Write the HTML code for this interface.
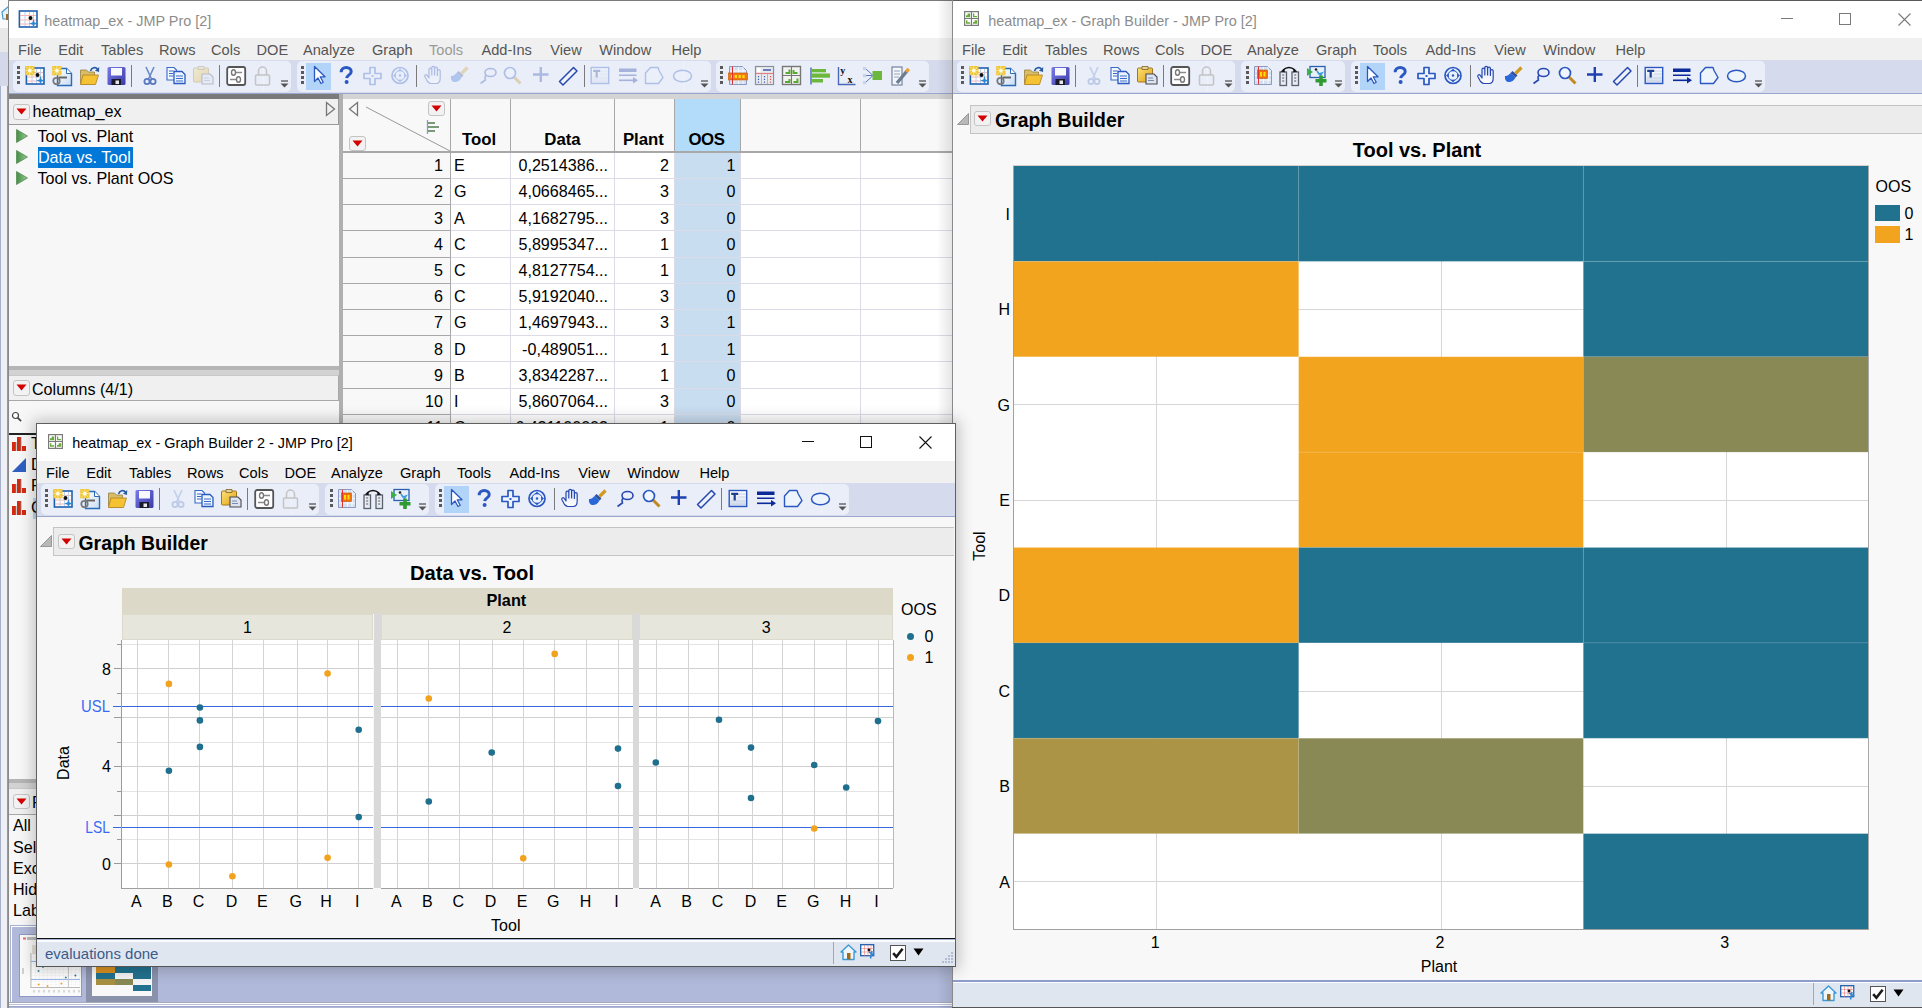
<!DOCTYPE html>
<html><head><meta charset="utf-8"><style>
html,body{margin:0;padding:0}
body{width:1922px;height:1008px;overflow:hidden;position:relative;background:#f0f0f0;font-family:'Liberation Sans', sans-serif}
.t{position:absolute;white-space:pre;line-height:1;font-family:'Liberation Sans', sans-serif}
.r{position:absolute;box-sizing:content-box}
svg{overflow:visible}
</style></head><body>
<div class="r" style="left:0.0px;top:0.0px;width:8.0px;height:28.0px;background:#fafafa;"></div><div class="r" style="left:0.0px;top:28.0px;width:8.0px;height:24.0px;background:#e8e8e8;"></div><div class="r" style="left:0.0px;top:52.0px;width:8.0px;height:34.0px;background:#d3d9eb;"></div><div class="r" style="left:0.0px;top:86.0px;width:8.0px;height:922.0px;background:#eef0f5;"></div><div class="r" style="left:0.0px;top:86.0px;width:1.0px;height:922.0px;background:#a6b0c8;"></div><div class="r" style="left:7.0px;top:86.0px;width:1.0px;height:922.0px;background:#8d99b3;"></div><svg style="position:absolute;left:1px;top:4px" width="8" height="16" viewBox="0 0 8 16"><path d="M1 8L8 2v13H2z" fill="#e4f0fa" stroke="#4a9ad0" stroke-width="1.2"/><rect x="5" y="10" width="3" height="6" fill="#9a6a20"/></svg><div class="r" style="left:8.0px;top:0.0px;width:1.0px;height:1008.0px;background:#8a8a8a;"></div><div class="r" style="left:9.0px;top:0.0px;width:944.0px;height:1.0px;background:#7a7a7a;"></div><div class="r" style="left:9.0px;top:1.0px;width:944.0px;height:37.0px;background:#fff;"></div><div class="t" style="left:44.3px;top:14.0px;font-size:14.4px;color:#8c8c8c;">heatmap_ex - JMP Pro [2]</div><svg style="position:absolute;left:17.0px;top:8.0px;opacity:1.0" width="22" height="22" viewBox="0 0 22 22"><rect x="2.4" y="3" width="17.6" height="16" fill="#fff" stroke="#1f5fb0" stroke-width="1.6"/><path d="M3 7.5h16M3 12h16M3 16h16" stroke="#f3a0a0" stroke-width=".8"/><path d="M8 4v14M12.5 4v14M16.5 4v14" stroke="#c0d0e8" stroke-width="1"/><circle cx="13.5" cy="10" r="2" fill="#111"/><path d="M16.5 11l1.1 3.4 3.4 1.1-3.4 1.1-1.1 3.4-1.1-3.4-3.4-1.1 3.4-1.1z" fill="#2a8ad8"/></svg><div class="r" style="left:9.0px;top:38.0px;width:944.0px;height:22.0px;background:#f0f0f0;"></div><div class="t" style="left:18.0px;top:42.9px;font-size:14.6px;color:#555;">File</div><div class="t" style="left:58.2px;top:42.9px;font-size:14.6px;color:#555;">Edit</div><div class="t" style="left:101.0px;top:42.9px;font-size:14.6px;color:#555;">Tables</div><div class="t" style="left:159.0px;top:42.9px;font-size:14.6px;color:#555;">Rows</div><div class="t" style="left:211.0px;top:42.9px;font-size:14.6px;color:#555;">Cols</div><div class="t" style="left:256.5px;top:42.9px;font-size:14.6px;color:#555;">DOE</div><div class="t" style="left:303.0px;top:42.9px;font-size:14.6px;color:#555;">Analyze</div><div class="t" style="left:372.0px;top:42.9px;font-size:14.6px;color:#555;">Graph</div><div class="t" style="left:429.0px;top:42.9px;font-size:14.6px;color:#9a9a9a;">Tools</div><div class="t" style="left:481.5px;top:42.9px;font-size:14.6px;color:#555;">Add-Ins</div><div class="t" style="left:550.3px;top:42.9px;font-size:14.6px;color:#555;">View</div><div class="t" style="left:599.3px;top:42.9px;font-size:14.6px;color:#555;">Window</div><div class="t" style="left:671.4px;top:42.9px;font-size:14.6px;color:#555;">Help</div><div class="r" style="left:9.0px;top:60.0px;width:944.0px;height:33.0px;background:#d5dbed;"></div><div class="r" style="left:9.0px;top:93.0px;width:944.0px;height:1.0px;background:#9ba6cf;"></div><div class="r" style="left:13px;top:61px;width:278px;height:31px;background:#e9eef9;border-radius:5px"></div><div class="r" style="left:263px;top:61px;width:1px;height:31px;background:#eef2fb"></div><div style="position:absolute;left:17px;top:66px;width:3px;height:3px;background:#5a5a5a"></div><div style="position:absolute;left:17px;top:71px;width:3px;height:3px;background:#5a5a5a"></div><div style="position:absolute;left:17px;top:76px;width:3px;height:3px;background:#5a5a5a"></div><div style="position:absolute;left:17px;top:81px;width:3px;height:3px;background:#5a5a5a"></div><svg style="position:absolute;left:23.5px;top:65.0px;opacity:1" width="22" height="22" viewBox="0 0 22 22"><rect x="2.4" y="3" width="17.6" height="16" fill="#fff" stroke="#1f5fb0" stroke-width="1.6"/><path d="M3 7.5h16M3 12h16M3 16h16" stroke="#f3a0a0" stroke-width=".8"/><path d="M8 4v14M12.5 4v14M16.5 4v14" stroke="#c0d0e8" stroke-width="1"/><circle cx="13.5" cy="10" r="2" fill="#111"/><path d="M16.5 11l1.1 3.4 3.4 1.1-3.4 1.1-1.1 3.4-1.1-3.4-3.4-1.1 3.4-1.1z" fill="#2a8ad8"/><rect x="1.2" y="1" width="9.3" height="9.3" fill="#efc535"/><path d="M5.85 1.2v8.9M1.4 5.65h8.9M2.2 2l7.3 7.3M9.5 2L2.2 9.3" stroke="#fbeaa0" stroke-width=".9"/><circle cx="5.85" cy="5.65" r="1.8" fill="#fffbe8"/></svg><svg style="position:absolute;left:50.8px;top:65.0px;opacity:1" width="22" height="22" viewBox="0 0 22 22"><defs><linearGradient id="pgg" x1="0" y1="0" x2="1" y2="1"><stop offset="0" stop-color="#fff"/><stop offset="1" stop-color="#c8dcf4"/></linearGradient></defs><path d="M6.5 3.5h9l5 5v12h-14z" fill="url(#pgg)" stroke="#2a6bb8" stroke-width="1.4"/><path d="M15.5 3.5v5h5" fill="#fff" stroke="#2a6bb8" stroke-width="1"/><circle cx="5.5" cy="16" r="3.2" fill="none" stroke="#7a7a7a" stroke-width="1.8"/><path d="M7.5 12.5h8.5" stroke="#666" stroke-width="2"/><rect x="1.2" y="1" width="9.3" height="9.3" fill="#efc535"/><path d="M5.85 1.2v8.9M1.4 5.65h8.9M2.2 2l7.3 7.3M9.5 2L2.2 9.3" stroke="#fbeaa0" stroke-width=".9"/><circle cx="5.85" cy="5.65" r="1.8" fill="#fffbe8"/></svg><svg style="position:absolute;left:78.0px;top:65.0px;opacity:1" width="22" height="22" viewBox="0 0 22 22"><path d="M2.5 5h6l2 2h6v12h-14z" fill="#d8bc68" stroke="#9a8040" stroke-width=".8"/><path d="M5 10h15.5l-3 9.5H2.5z" fill="#f4c232" stroke="#b08020" stroke-width=".8"/><path d="M12.5 6C13.5 2.5 17.5 1.5 19.5 4" fill="none" stroke="#2a5aa0" stroke-width="1.6"/><path d="M21.2 2l-.2 5-4-1.2z" fill="#2a5aa0"/></svg><svg style="position:absolute;left:104.7px;top:65.0px;opacity:1" width="22" height="22" viewBox="0 0 22 22"><defs><linearGradient id="svg_" x1="0" y1="0" x2="1" y2="1"><stop offset="0" stop-color="#7a7ae8"/><stop offset="1" stop-color="#3a3aa8"/></linearGradient></defs><rect x="2.5" y="2" width="18" height="18" rx="1.5" fill="url(#svg_)"/><rect x="6" y="3" width="11" height="7.5" fill="#f8f8ff"/><rect x="6.5" y="14" width="9.5" height="6" fill="#1a1a2a"/><rect x="10.5" y="15.5" width="3.5" height="3.5" fill="#e8e8e8"/></svg><svg style="position:absolute;left:138.5px;top:65.0px;opacity:1" width="22" height="22" viewBox="0 0 22 22"><path d="M7 2l5.5 12M15 2l-5.5 12" stroke="#6a8ac8" stroke-width="1.6"/><circle cx="8" cy="16.5" r="2.6" fill="none" stroke="#5a7ac0" stroke-width="1.8"/><circle cx="14" cy="16.5" r="2.6" fill="none" stroke="#5a7ac0" stroke-width="1.8"/></svg><svg style="position:absolute;left:164.5px;top:65.0px;opacity:1" width="22" height="22" viewBox="0 0 22 22"><path d="M2 2.5h7l2.5 2.5v10H2z" fill="#f4f8ff" stroke="#3a6ac8" stroke-width="1.1"/><path d="M9 6.5h8l3 3v9H9z" fill="#eef4ff" stroke="#2a5ac0" stroke-width="1.3"/><path d="M4 6h4.5M4 8.5h4.5M4 11h4.5M11 11h7M11 13.5h7M11 16h7" stroke="#3a6ac8" stroke-width="1"/></svg><svg style="position:absolute;left:191.8px;top:65.0px;opacity:0.3" width="22" height="22" viewBox="0 0 22 22"><defs><linearGradient id="pst" x1="0" y1="0" x2="1" y2="1"><stop offset="0" stop-color="#fce27a"/><stop offset="1" stop-color="#e0a010"/></linearGradient></defs><rect x="1.5" y="3" width="15" height="14" rx="1" fill="url(#pst)" stroke="#a07820" stroke-width="1"/><path d="M6 1.5h6v3H6z" fill="#e4d49a" stroke="#806020" stroke-width=".8"/><path d="M10 9h8l3 3v7H10z" fill="#dde4f0" stroke="#4a4a50" stroke-width="1.1"/><path d="M12 13h5M12 15.5h6" stroke="#7a8aa8" stroke-width="1"/></svg><svg style="position:absolute;left:224.9px;top:65.0px;opacity:1" width="22" height="22" viewBox="0 0 22 22"><rect x="2.2" y="2" width="18" height="18" rx="2" fill="#fff" stroke="#555" stroke-width="1.8"/><path d="M6 7.5h11M5 14.5h11" stroke="#8a8a8a" stroke-width="1.5"/><ellipse cx="8.5" cy="7.5" rx="2" ry="2.8" fill="#fff" stroke="#777" stroke-width="1.4"/><ellipse cx="13.5" cy="14.5" rx="2" ry="2.8" fill="#fff" stroke="#777" stroke-width="1.4"/></svg><svg style="position:absolute;left:252.2px;top:65.0px;opacity:1" width="22" height="22" viewBox="0 0 22 22"><rect x="3.5" y="10" width="14" height="10" rx="1" fill="none" stroke="#c4c4c4" stroke-width="1.5"/><path d="M6.5 10V6a4 4 0 0 1 8 0v4" fill="none" stroke="#c4c4c4" stroke-width="1.5"/></svg><div class="r" style="left:131.3px;top:65.0px;width:1.0px;height:22.0px;background:#7a7a7a;"></div><div class="r" style="left:219.2px;top:65.0px;width:1.0px;height:22.0px;background:#7a7a7a;"></div><svg style="position:absolute;left:280.3px;top:80px" width="9" height="9" viewBox="0 0 9 9"><path d="M1 1h7" stroke="#555" stroke-width="1.3"/><path d="M.5 3.5h8l-4 4z" fill="#555"/></svg><div class="r" style="left:297px;top:61px;width:414px;height:31px;background:#e9eef9;border-radius:5px"></div><div class="r" style="left:683px;top:61px;width:1px;height:31px;background:#eef2fb"></div><div style="position:absolute;left:301px;top:66px;width:3px;height:3px;background:#5a5a5a"></div><div style="position:absolute;left:301px;top:71px;width:3px;height:3px;background:#5a5a5a"></div><div style="position:absolute;left:301px;top:76px;width:3px;height:3px;background:#5a5a5a"></div><div style="position:absolute;left:301px;top:81px;width:3px;height:3px;background:#5a5a5a"></div><div class="r" style="left:306.0px;top:63.0px;width:25.0px;height:27.0px;background:#b2d4f8;"></div><svg style="position:absolute;left:307.7px;top:65.0px;opacity:1" width="22" height="22" viewBox="0 0 22 22"><path d="M6.5 1.5v15l3.5-3.5 3 5.5 2.2-1.2-3-5.5h4.8z" fill="#fff" stroke="#2a58c0" stroke-width="1.3" stroke-linejoin="round"/></svg><svg style="position:absolute;left:335.0px;top:65.0px;opacity:1" width="22" height="22" viewBox="0 0 22 22"><path d="M6.2 7.2c0-3 2.5-4.7 5-4.7 3 0 5 1.8 5 4.2 0 3-4.2 3.3-4.5 6.5" fill="none" stroke="#2a58c0" stroke-width="3"/><circle cx="11.6" cy="17" r="2" fill="#2a58c0"/></svg><svg style="position:absolute;left:361.0px;top:65.0px;opacity:0.3" width="22" height="22" viewBox="0 0 22 22"><path d="M9 2.5h5v6h6v5h-6v6H9v-6H3v-5h6z" fill="#eef4ff" stroke="#2a58c0" stroke-width="1.7" stroke-linejoin="round"/><rect x="10.5" y="10" width="2" height="2" fill="#2a58c0"/></svg><svg style="position:absolute;left:388.5px;top:65.0px;opacity:0.3" width="22" height="22" viewBox="0 0 22 22"><circle cx="11" cy="10.5" r="8" fill="#e8f0fc" stroke="#2a58c0" stroke-width="1.7"/><circle cx="11" cy="10.5" r="5" fill="none" stroke="#2a58c0" stroke-width="1"/><path d="M11 3.5l2.2 2.8h-4.4zM11 17.5l2.2-2.8h-4.4zM4 10.5l2.8-2.2v4.4zM18 10.5l-2.8-2.2v4.4z" fill="#2a58c0"/><circle cx="11" cy="10.5" r="1.2" fill="#2a58c0"/></svg><svg style="position:absolute;left:422.7px;top:65.0px;opacity:0.3" width="22" height="22" viewBox="0 0 22 22"><defs><linearGradient id="hnd" x1="0" y1="0" x2="0" y2="1"><stop offset="0" stop-color="#d8e4f8"/><stop offset="1" stop-color="#fff"/></linearGradient></defs><path d="M4.5 16.5L1.8 11.5a1.3 1.3 0 0 1 2.2-1.3L6 13V4.5a1.4 1.4 0 0 1 2.8 0V10V2.8a1.4 1.4 0 0 1 2.8 0V10V3.5a1.4 1.4 0 0 1 2.8 0V10.5V6a1.4 1.4 0 0 1 2.8 0V13c0 3-1.5 5.5-4 5.5H8c-1.5 0-2.5-1-3.5-2z" fill="url(#hnd)" stroke="#2848b0" stroke-width="1.2" stroke-linejoin="round"/></svg><svg style="position:absolute;left:449.0px;top:65.0px;opacity:0.3" width="22" height="22" viewBox="0 0 22 22"><path d="M12.5 8.5l6-6" stroke="#d09a20" stroke-width="3.2"/><path d="M2 11c2 .5 3.5-1 5.5-3l5 4.5c-1.5 3-4 4.5-6.5 4.5S1.5 15 2 11z" fill="#2a68d8"/><path d="M7.5 8l5 4.5 2-2-5-4.5z" fill="#3050a0"/></svg><svg style="position:absolute;left:476.8px;top:65.0px;opacity:0.3" width="22" height="22" viewBox="0 0 22 22"><ellipse cx="13.5" cy="7.5" rx="5.5" ry="4" fill="none" stroke="#2848b0" stroke-width="1.6"/><path d="M9.5 10c-2 1.5-2 3.5-.5 4.5M9 14.5l-5.5 4" fill="none" stroke="#2848b0" stroke-width="1.6"/></svg><svg style="position:absolute;left:502.3px;top:65.0px;opacity:0.3" width="22" height="22" viewBox="0 0 22 22"><path d="M11.5 11.5l7 7" stroke="#c08a20" stroke-width="3"/><circle cx="8" cy="8" r="5.5" fill="#f0f6ff" stroke="#2a58c0" stroke-width="1.7"/></svg><svg style="position:absolute;left:529.9px;top:65.0px;opacity:0.3" width="22" height="22" viewBox="0 0 22 22"><path d="M10.8 2v15M3 9.5h15.5" stroke="#1f40b0" stroke-width="2.4"/></svg><svg style="position:absolute;left:557.2px;top:65.0px;opacity:1" width="22" height="22" viewBox="0 0 22 22"><path d="M2.5 16.5L16.5 2.5l3.5 3.5L6 20z" fill="#eef2fb" stroke="#2848b0" stroke-width="1.5" stroke-linejoin="round"/></svg><svg style="position:absolute;left:589.0px;top:65.0px;opacity:0.3" width="22" height="22" viewBox="0 0 22 22"><defs><linearGradient id="tbx" x1="0" y1="0" x2="0" y2="1"><stop offset="0" stop-color="#fff"/><stop offset="1" stop-color="#cfd9ea"/></linearGradient></defs><rect x="2.2" y="2.5" width="17.5" height="16" fill="url(#tbx)" stroke="#2a58c0" stroke-width="1.4"/><path d="M11 6h8M11 9h8M4 13h15M4 16h15" stroke="#c8d4e8" stroke-width="1"/><path d="M4.2 4.8h7v2.2h-2.4v5.5H6.6V7H4.2z" fill="#1f3f90"/></svg><svg style="position:absolute;left:617.0px;top:65.0px;opacity:0.3" width="22" height="22" viewBox="0 0 22 22"><rect x="2" y="3.5" width="17.5" height="3.5" fill="#0a2a9a"/><rect x="2" y="9.5" width="17.5" height="1.5" fill="#0a2a9a"/><rect x="2" y="14.5" width="15" height="1.6" fill="#0a2a9a"/><path d="M16 12l5 3.3-5 3.3z" fill="#0a2a9a"/></svg><svg style="position:absolute;left:643.0px;top:65.0px;opacity:0.3" width="22" height="22" viewBox="0 0 22 22"><path d="M2.5 8L7.5 2.5h7.5l1 3 4 7-4.5 6H2.5z" fill="#eef4fc" stroke="#2a58c0" stroke-width="1.4" stroke-linejoin="round"/></svg><svg style="position:absolute;left:671.4px;top:65.0px;opacity:0.3" width="22" height="22" viewBox="0 0 22 22"><ellipse cx="11.5" cy="11" rx="9" ry="5.8" fill="#eef4fc" stroke="#2a58c0" stroke-width="1.5"/></svg><div class="r" style="left:416.0px;top:65.0px;width:1.0px;height:22.0px;background:#7a7a7a;"></div><div class="r" style="left:583.5px;top:65.0px;width:1.0px;height:22.0px;background:#7a7a7a;"></div><svg style="position:absolute;left:699.5px;top:80px" width="9" height="9" viewBox="0 0 9 9"><path d="M1 1h7" stroke="#555" stroke-width="1.3"/><path d="M.5 3.5h8l-4 4z" fill="#555"/></svg><div class="r" style="left:716px;top:61px;width:213px;height:31px;background:#e9eef9;border-radius:5px"></div><div class="r" style="left:901px;top:61px;width:1px;height:31px;background:#eef2fb"></div><div style="position:absolute;left:720px;top:66px;width:3px;height:3px;background:#5a5a5a"></div><div style="position:absolute;left:720px;top:71px;width:3px;height:3px;background:#5a5a5a"></div><div style="position:absolute;left:720px;top:76px;width:3px;height:3px;background:#5a5a5a"></div><div style="position:absolute;left:720px;top:81px;width:3px;height:3px;background:#5a5a5a"></div><svg style="position:absolute;left:726.8px;top:65.0px;opacity:1.0" width="22" height="22" viewBox="0 0 22 22"><path d="M2.5 1.5h13l4 4v14h-17z" fill="#d4dff2" stroke="#8a9ac0" stroke-width="1"/><path d="M3 6h16M3 15h16M7 2v17M11.5 2v17M16 2v17" stroke="#fff" stroke-width=".8"/><rect x="1.5" y="8" width="19" height="7" fill="#f07818" stroke="#c05800" stroke-width=".6"/><path d="M4 11.5h14" stroke="#ffe000" stroke-width="3" stroke-dasharray="2.2 1.6"/><path d="M5.5 1.5v18" stroke="#e03030" stroke-width="1"/></svg><svg style="position:absolute;left:754.0px;top:65.0px;opacity:1.0" width="22" height="22" viewBox="0 0 22 22"><rect x="1.5" y="1.5" width="18" height="18" fill="#e8ebf0" stroke="#8a8f98" stroke-width="1.2"/><rect x="3" y="3" width="3.5" height="4" fill="#fff"/><path d="M9 5h8" stroke="#3a5ab0" stroke-width="1.5"/><path d="M2 8.5h17" stroke="#e08080" stroke-width="1.2"/><path d="M7.5 9v10M13.5 9v10" stroke="#b0b4bc" stroke-width="1"/><path d="M4.5 11v7M10.5 11v7" stroke="#3a5ab0" stroke-width="1.2" stroke-dasharray="1.2 1.6"/><path d="M16.5 11v7" stroke="#e05050" stroke-width="1.2" stroke-dasharray="1.2 1.6"/></svg><svg style="position:absolute;left:780.5px;top:65.0px;opacity:1.0" width="22" height="22" viewBox="0 0 22 22"><rect x="1.5" y="1.5" width="18" height="18" fill="#f2f2f2" stroke="#777" stroke-width="1.4"/><path d="M10.5 2v17M2 10.5h17" stroke="#777" stroke-width="1.1"/><path d="M4.5 8h4V4.5M12.5 5v3h4M4 17h4.5v-3M12.5 17h4v-3.5" fill="none" stroke="#5aa830" stroke-width="2"/></svg><svg style="position:absolute;left:808.4px;top:65.0px;opacity:1.0" width="22" height="22" viewBox="0 0 22 22"><path d="M3 2.5v17" stroke="#4a68b8" stroke-width="1.4"/><rect x="4" y="4" width="14" height="3.3" fill="#6cb83c"/><rect x="4" y="8.5" width="18" height="4.2" fill="#6cb83c"/><rect x="4" y="14" width="11" height="3.5" fill="#6cb83c"/></svg><svg style="position:absolute;left:835.0px;top:65.0px;opacity:1.0" width="22" height="22" viewBox="0 0 22 22"><path d="M3.5 2v17.5h17" fill="none" stroke="#4a68b8" stroke-width="1.4"/><text x="5.2" y="8.5" font-family="Liberation Serif" font-weight="bold" font-size="10" fill="#111">y</text><text x="12.5" y="17.5" font-family="Liberation Serif" font-weight="bold" font-size="10" fill="#111">x</text></svg><svg style="position:absolute;left:862.0px;top:65.0px;opacity:1.0" width="22" height="22" viewBox="0 0 22 22"><rect x="10.5" y="6" width="9.5" height="9" fill="#6cb83c"/><path d="M4 4l6.5 6M4 17l6.5-6M4 10.5h6.5" stroke="#5a78b8" stroke-width="1"/><rect x="1" y="2" width="3.2" height="3.2" fill="#c8d4ea"/><rect x="1" y="9" width="3.2" height="3.2" fill="#c8d4ea"/><rect x="1" y="16" width="3.2" height="3.2" fill="#c8d4ea"/></svg><svg style="position:absolute;left:890.0px;top:65.0px;opacity:1.0" width="22" height="22" viewBox="0 0 22 22"><rect x="2" y="2" width="10" height="18" fill="#f4f6fa" stroke="#6a7a98" stroke-width="1.1"/><path d="M4 6h6M4 9h6M4 12h5" stroke="#8a9ab8" stroke-width=".9"/><path d="M7 18l10-12" stroke="#6d7d90" stroke-width="3.4"/><path d="M16.3 6.8l2.4-2.9" stroke="#f0a030" stroke-width="3.4"/></svg><svg style="position:absolute;left:917.5px;top:80px" width="9" height="9" viewBox="0 0 9 9"><path d="M1 1h7" stroke="#555" stroke-width="1.3"/><path d="M.5 3.5h8l-4 4z" fill="#555"/></svg><div class="r" style="left:9.0px;top:94.0px;width:944.0px;height:914.0px;background:#f7f7f7;"></div><div class="r" style="left:9.0px;top:94.0px;width:330.0px;height:5.0px;background:#7a7a7a;"></div><div class="r" style="left:9.0px;top:99.0px;width:329.0px;height:25.0px;background:#f0f0f0;border-bottom:1px solid #9a9a9a;border-right:1px solid #9a9a9a"></div><div class="r" style="left:13px;top:104px;width:15px;height:14px;border:1px solid #c4c4c4;border-radius:3px;background:#f2f2f2"></div><svg style="position:absolute;left:16px;top:108px" width="11" height="7" viewBox="0 0 11 7"><path d="M0.5 0.5h10l-5 6z" fill="#d40000"/></svg><div class="t" style="left:32.5px;top:102.8px;font-size:16.2px;color:#000;">heatmap_ex</div><svg style="position:absolute;left:325px;top:101px" width="11" height="16" viewBox="0 0 11 16"><path d="M1.5 1.5L9.5 8L1.5 14.5z" fill="#f0f0f0" stroke="#777" stroke-width="1.3"/></svg><svg style="position:absolute;left:16px;top:128.5px" width="12" height="14" viewBox="0 0 12 14"><defs><linearGradient id="gt" x1="0" y1="0" x2="1" y2="0"><stop offset="0" stop-color="#3f8f3f"/><stop offset="1" stop-color="#98c898"/></linearGradient></defs><path d="M.5 .5L11.5 7L.5 13.5z" fill="url(#gt)" stroke="#5a8a5a" stroke-width=".8"/></svg><div class="t" style="left:37.5px;top:127.9px;font-size:16.1px;color:#000;">Tool vs. Plant</div><svg style="position:absolute;left:16px;top:149.5px" width="12" height="14" viewBox="0 0 12 14"><defs><linearGradient id="gt" x1="0" y1="0" x2="1" y2="0"><stop offset="0" stop-color="#3f8f3f"/><stop offset="1" stop-color="#98c898"/></linearGradient></defs><path d="M.5 .5L11.5 7L.5 13.5z" fill="url(#gt)" stroke="#5a8a5a" stroke-width=".8"/></svg><div class="r" style="left:38.0px;top:147.0px;width:95.0px;height:20.5px;background:#0078d7;"></div><div class="t" style="left:38.0px;top:148.9px;font-size:16.1px;color:#fff;">Data vs. Tool</div><svg style="position:absolute;left:16px;top:170.5px" width="12" height="14" viewBox="0 0 12 14"><defs><linearGradient id="gt" x1="0" y1="0" x2="1" y2="0"><stop offset="0" stop-color="#3f8f3f"/><stop offset="1" stop-color="#98c898"/></linearGradient></defs><path d="M.5 .5L11.5 7L.5 13.5z" fill="url(#gt)" stroke="#5a8a5a" stroke-width=".8"/></svg><div class="t" style="left:37.5px;top:169.9px;font-size:16.1px;color:#000;">Tool vs. Plant OOS</div><div class="r" style="left:9.0px;top:366.0px;width:330.0px;height:3.5px;background:#b5b5b5;"></div><div class="r" style="left:9.0px;top:369.5px;width:330.0px;height:6.0px;background:#d2d2d2;"></div><div class="r" style="left:9.0px;top:375.0px;width:329.0px;height:24.0px;background:#f0f0f0;border-bottom:1px solid #a8a8a8;border-right:1px solid #a8a8a8;border-top:1px solid #c8c8c8"></div><div class="r" style="left:13px;top:380px;width:15px;height:14px;border:1px solid #c4c4c4;border-radius:3px;background:#f2f2f2"></div><svg style="position:absolute;left:16px;top:384px" width="11" height="7" viewBox="0 0 11 7"><path d="M0.5 0.5h10l-5 6z" fill="#d40000"/></svg><div class="t" style="left:32.0px;top:381.4px;font-size:16.1px;color:#000;">Columns (4/1)</div><svg style="position:absolute;left:11px;top:411px" width="12" height="12" viewBox="0 0 12 12"><circle cx="4.5" cy="4.5" r="3" fill="#fff" stroke="#444" stroke-width="1.2"/><path d="M6.8 6.8l3.3 3.3" stroke="#444" stroke-width="1.7"/></svg><div class="r" style="left:9.0px;top:433.0px;width:330.0px;height:1.5px;background:#222;"></div><div class="r" style="left:33.0px;top:498.0px;width:6.0px;height:21.0px;background:#b8d6f0;"></div><svg style="position:absolute;left:11px;top:436.0px" width="16" height="16" viewBox="0 0 16 16"><rect x="1" y="6" width="4" height="9" fill="#d42a10"/><rect x="6" y="1" width="4" height="14" fill="#d42a10"/><rect x="11" y="10" width="4" height="5" fill="#d42a10"/><path d="M5 6v9M10 1v14" stroke="#888" stroke-width=".8"/></svg><div class="t" style="left:31.0px;top:436.0px;font-size:16px;color:#000;">T</div><svg style="position:absolute;left:11px;top:457.2px" width="16" height="16" viewBox="0 0 16 16"><path d="M1 15L15 1v14z" fill="#2f5fc0"/></svg><div class="t" style="left:31.0px;top:457.2px;font-size:16px;color:#000;">D</div><svg style="position:absolute;left:11px;top:478.4px" width="16" height="16" viewBox="0 0 16 16"><rect x="1" y="6" width="4" height="9" fill="#d42a10"/><rect x="6" y="1" width="4" height="14" fill="#d42a10"/><rect x="11" y="10" width="4" height="5" fill="#d42a10"/><path d="M5 6v9M10 1v14" stroke="#888" stroke-width=".8"/></svg><div class="t" style="left:31.0px;top:478.4px;font-size:16px;color:#000;">F</div><svg style="position:absolute;left:11px;top:499.6px" width="16" height="16" viewBox="0 0 16 16"><rect x="1" y="6" width="4" height="9" fill="#d42a10"/><rect x="6" y="1" width="4" height="14" fill="#d42a10"/><rect x="11" y="10" width="4" height="5" fill="#d42a10"/><path d="M5 6v9M10 1v14" stroke="#888" stroke-width=".8"/></svg><div class="t" style="left:31.0px;top:499.6px;font-size:16px;color:#000;">C</div><div class="r" style="left:9.0px;top:779.0px;width:330.0px;height:3.5px;background:#b5b5b5;"></div><div class="r" style="left:9.0px;top:782.5px;width:330.0px;height:5.5px;background:#d2d2d2;"></div><div class="r" style="left:9.0px;top:788.0px;width:329.0px;height:24.5px;background:#f0f0f0;border-bottom:1px solid #a8a8a8;border-right:1px solid #a8a8a8;border-top:1px solid #c8c8c8"></div><div class="r" style="left:13px;top:794px;width:15px;height:13px;border:1px solid #c4c4c4;border-radius:3px;background:#f2f2f2"></div><svg style="position:absolute;left:16px;top:798px" width="11" height="7" viewBox="0 0 11 7"><path d="M0.5 0.5h10l-5 6z" fill="#d40000"/></svg><div class="t" style="left:32.0px;top:794.5px;font-size:16px;color:#000;">Rows</div><div class="t" style="left:13.0px;top:817.4px;font-size:16.1px;color:#000;">All rows</div><div class="t" style="left:13.0px;top:838.5px;font-size:16.1px;color:#000;">Selected</div><div class="t" style="left:13.0px;top:859.6px;font-size:16.1px;color:#000;">Excluded</div><div class="t" style="left:13.0px;top:880.7px;font-size:16.1px;color:#000;">Hidden</div><div class="t" style="left:13.0px;top:901.8px;font-size:16.1px;color:#000;">Labelled</div><div class="r" style="left:9.0px;top:924.0px;width:330.0px;height:80.0px;background:#f4f5f8;"></div><div class="r" style="left:11.0px;top:926.0px;width:940.0px;height:76.0px;background:#b0b9d9;border:1px solid #fff;outline:1px solid #a8b2cf"></div><div class="r" style="left:19.0px;top:934.0px;width:61.0px;height:61.0px;background:#fafafa;border:1px solid #8f98c4"></div><svg style="position:absolute;left:20px;top:935px" width="60" height="60" viewBox="20 935 60 60"><rect x="31" y="955" width="49" height="32" fill="#fff"/><rect x="31" y="955" width=".5" height="32" fill="#f0f0f0"/><rect x="35" y="955" width=".5" height="32" fill="#f0f0f0"/><rect x="39" y="955" width=".5" height="32" fill="#f0f0f0"/><rect x="43" y="955" width=".5" height="32" fill="#f0f0f0"/><rect x="47" y="955" width=".5" height="32" fill="#f0f0f0"/><rect x="51" y="955" width=".5" height="32" fill="#f0f0f0"/><rect x="55" y="955" width=".5" height="32" fill="#f0f0f0"/><rect x="59" y="955" width=".5" height="32" fill="#f0f0f0"/><rect x="63" y="955" width=".5" height="32" fill="#f0f0f0"/><rect x="67" y="955" width=".5" height="32" fill="#f0f0f0"/><rect x="71" y="955" width=".5" height="32" fill="#f0f0f0"/><rect x="75" y="955" width=".5" height="32" fill="#f0f0f0"/><rect x="79" y="955" width=".5" height="32" fill="#f0f0f0"/><rect x="31" y="957" width="49" height=".5" fill="#f2f2f2"/><rect x="31" y="960" width="49" height=".5" fill="#f2f2f2"/><rect x="31" y="963" width="49" height=".5" fill="#f2f2f2"/><rect x="31" y="966" width="49" height=".5" fill="#f2f2f2"/><rect x="31" y="969" width="49" height=".5" fill="#f2f2f2"/><rect x="31" y="972" width="49" height=".5" fill="#f2f2f2"/><rect x="31" y="975" width="49" height=".5" fill="#f2f2f2"/><rect x="31" y="978" width="49" height=".5" fill="#f2f2f2"/><rect x="31" y="981" width="49" height=".5" fill="#f2f2f2"/><rect x="31" y="984" width="49" height=".5" fill="#f2f2f2"/><rect x="32" y="945" width="47" height="9" fill="#e4e2d6"/><rect x="31" y="961" width="49" height="1" fill="#9ab4ee"/><rect x="31" y="979" width="49" height="1" fill="#9ab4ee"/><rect x="30.5" y="953" width=".8" height="34.5" fill="#aaa"/><rect x="30.5" y="987" width="49.5" height=".8" fill="#aaa"/><rect x="68" y="955" width="1" height="32" fill="#ccc"/><circle cx="38.6" cy="984.4" r="1" fill="#f2a31e"/><circle cx="47.5" cy="986" r="1" fill="#f2a31e"/><circle cx="61.4" cy="983.5" r="1" fill="#f2a31e"/><circle cx="38.5" cy="971" r="1" fill="#3a8aa8"/><circle cx="43" cy="967" r="1" fill="#3a8aa8"/><circle cx="65.8" cy="977.5" r="1" fill="#3a8aa8"/><circle cx="75.4" cy="975.4" r="1" fill="#2a7a98"/><rect x="23" y="937.5" width="3" height="2" fill="#e66"/><rect x="27" y="937" width="10" height="3" fill="#bbb"/><rect x="22" y="968" width="2" height="6" fill="#d0d0d0"/><rect x="33" y="990" width="2" height="2.5" fill="#d8d8d8"/><rect x="38" y="990" width="2" height="2.5" fill="#d8d8d8"/><rect x="43" y="990" width="2" height="2.5" fill="#d8d8d8"/><rect x="48" y="990" width="2" height="2.5" fill="#d8d8d8"/><rect x="53" y="990" width="2" height="2.5" fill="#d8d8d8"/><rect x="58" y="990" width="2" height="2.5" fill="#d8d8d8"/><rect x="63" y="990" width="2" height="2.5" fill="#d8d8d8"/><rect x="68" y="990" width="2" height="2.5" fill="#d8d8d8"/><rect x="73" y="990" width="2" height="2.5" fill="#d8d8d8"/><rect x="78" y="990" width="2" height="2.5" fill="#d8d8d8"/></svg><div class="r" style="left:86.0px;top:961.0px;width:72.0px;height:41.0px;background:#8a91ab;"></div><div class="r" style="left:92.0px;top:966.0px;width:60.0px;height:30.0px;background:#f8f8f8;"></div><div class="r" style="left:96.0px;top:967.0px;width:19.0px;height:6.0px;background:#d99020;"></div><div class="r" style="left:115.0px;top:967.0px;width:36.0px;height:6.0px;background:#22728f;"></div><div class="r" style="left:96.0px;top:973.0px;width:19.0px;height:6.0px;background:#22728f;"></div><div class="r" style="left:115.0px;top:973.0px;width:18.0px;height:6.0px;background:#f4f4f4;"></div><div class="r" style="left:133.0px;top:973.0px;width:18.0px;height:6.0px;background:#22728f;"></div><div class="r" style="left:96.0px;top:979.0px;width:19.0px;height:6.0px;background:#a89040;"></div><div class="r" style="left:115.0px;top:979.0px;width:18.0px;height:6.0px;background:#888a55;"></div><div class="r" style="left:133.0px;top:979.0px;width:18.0px;height:6.0px;background:#f4f4f4;"></div><div class="r" style="left:133.0px;top:985.0px;width:18.0px;height:6.0px;background:#22728f;"></div><div class="r" style="left:9.0px;top:1002.0px;width:944.0px;height:1.0px;background:#a8aab8;"></div><div class="r" style="left:9.0px;top:1003.0px;width:944.0px;height:1.0px;background:#ffffff;"></div><div class="r" style="left:9.0px;top:1004.0px;width:944.0px;height:1.0px;background:#b8c0dc;"></div><div class="r" style="left:9.0px;top:1005.0px;width:944.0px;height:1.0px;background:#ffffff;"></div><div class="r" style="left:9.0px;top:1006.0px;width:944.0px;height:1.0px;background:#9aa4cc;"></div><div class="r" style="left:9.0px;top:1007.0px;width:944.0px;height:1.0px;background:#b0b8d8;"></div><div class="r" style="left:339.0px;top:94.0px;width:4.0px;height:830.0px;background:#b0b0b0;"></div><div class="r" style="left:343.0px;top:94.0px;width:610.0px;height:5.0px;background:#d4d4d4;"></div><div class="r" style="left:343.0px;top:99.0px;width:610.0px;height:825.0px;background:#fff;"></div><div class="r" style="left:343.0px;top:99.0px;width:107.0px;height:825.0px;background:#f8f8f8;"></div><div class="r" style="left:450.0px;top:99.0px;width:610.0px;height:52.0px;background:#f8f8f8;"></div><div class="r" style="left:675.0px;top:99.0px;width:65.0px;height:52.0px;background:#b3dcfa;"></div><div class="r" style="left:675.0px;top:153.0px;width:65.0px;height:780.0px;background:#c9ddf0;"></div><div class="r" style="left:450.0px;top:99.0px;width:1.0px;height:52.0px;background:#a8a8a8;"></div><div class="r" style="left:510.0px;top:99.0px;width:1.0px;height:52.0px;background:#a8a8a8;"></div><div class="r" style="left:614.0px;top:99.0px;width:1.0px;height:52.0px;background:#a8a8a8;"></div><div class="r" style="left:674.0px;top:99.0px;width:1.0px;height:52.0px;background:#a8a8a8;"></div><div class="r" style="left:740.0px;top:99.0px;width:1.0px;height:52.0px;background:#a8a8a8;"></div><div class="r" style="left:860.0px;top:99.0px;width:1.0px;height:52.0px;background:#a8a8a8;"></div><div class="r" style="left:510.0px;top:152.0px;width:1.0px;height:780.0px;background:#dcdce8;"></div><div class="r" style="left:614.0px;top:152.0px;width:1.0px;height:780.0px;background:#dcdce8;"></div><div class="r" style="left:674.0px;top:152.0px;width:1.0px;height:780.0px;background:#dcdce8;"></div><div class="r" style="left:740.0px;top:152.0px;width:1.0px;height:780.0px;background:#dcdce8;"></div><div class="r" style="left:860.0px;top:152.0px;width:1.0px;height:780.0px;background:#dcdce8;"></div><div class="r" style="left:450.0px;top:152.0px;width:1.0px;height:780.0px;background:#a8a8a8;"></div><div class="r" style="left:343.0px;top:151.0px;width:610.0px;height:2.0px;background:#a8a8a8;"></div><div class="r" style="left:343.0px;top:178.0px;width:107.0px;height:1.0px;background:#a8a8a8;"></div><div class="r" style="left:451.0px;top:178.0px;width:502.0px;height:1.0px;background:#dcdce8;"></div><div class="r" style="left:343.0px;top:204.0px;width:107.0px;height:1.0px;background:#a8a8a8;"></div><div class="r" style="left:451.0px;top:204.0px;width:502.0px;height:1.0px;background:#dcdce8;"></div><div class="r" style="left:343.0px;top:230.0px;width:107.0px;height:1.0px;background:#a8a8a8;"></div><div class="r" style="left:451.0px;top:230.0px;width:502.0px;height:1.0px;background:#dcdce8;"></div><div class="r" style="left:343.0px;top:257.0px;width:107.0px;height:1.0px;background:#a8a8a8;"></div><div class="r" style="left:451.0px;top:257.0px;width:502.0px;height:1.0px;background:#dcdce8;"></div><div class="r" style="left:343.0px;top:283.0px;width:107.0px;height:1.0px;background:#a8a8a8;"></div><div class="r" style="left:451.0px;top:283.0px;width:502.0px;height:1.0px;background:#dcdce8;"></div><div class="r" style="left:343.0px;top:309.0px;width:107.0px;height:1.0px;background:#a8a8a8;"></div><div class="r" style="left:451.0px;top:309.0px;width:502.0px;height:1.0px;background:#dcdce8;"></div><div class="r" style="left:343.0px;top:335.0px;width:107.0px;height:1.0px;background:#a8a8a8;"></div><div class="r" style="left:451.0px;top:335.0px;width:502.0px;height:1.0px;background:#dcdce8;"></div><div class="r" style="left:343.0px;top:361.0px;width:107.0px;height:1.0px;background:#a8a8a8;"></div><div class="r" style="left:451.0px;top:361.0px;width:502.0px;height:1.0px;background:#dcdce8;"></div><div class="r" style="left:343.0px;top:388.0px;width:107.0px;height:1.0px;background:#a8a8a8;"></div><div class="r" style="left:451.0px;top:388.0px;width:502.0px;height:1.0px;background:#dcdce8;"></div><div class="r" style="left:343.0px;top:414.0px;width:107.0px;height:1.0px;background:#a8a8a8;"></div><div class="r" style="left:451.0px;top:414.0px;width:502.0px;height:1.0px;background:#dcdce8;"></div><div class="r" style="left:343.0px;top:440.0px;width:107.0px;height:1.0px;background:#a8a8a8;"></div><div class="r" style="left:451.0px;top:440.0px;width:502.0px;height:1.0px;background:#dcdce8;"></div><svg style="position:absolute;left:348px;top:101px" width="11" height="16" viewBox="0 0 11 16"><path d="M9.5 1.5L1.5 8L9.5 14.5z" fill="#f8f8f8" stroke="#777" stroke-width="1.3"/></svg><svg style="position:absolute;left:365px;top:106px" width="86" height="46" viewBox="0 0 86 46"><path d="M1 1L85 45" stroke="#999" stroke-width="1"/></svg><div class="r" style="left:428px;top:101px;width:15px;height:13px;border:1px solid #c4c4c4;border-radius:3px;background:#f2f2f2"></div><svg style="position:absolute;left:431px;top:105px" width="11" height="7" viewBox="0 0 11 7"><path d="M0.5 0.5h10l-5 6z" fill="#d40000"/></svg><div class="r" style="left:349px;top:136px;width:15px;height:13px;border:1px solid #c4c4c4;border-radius:3px;background:#f2f2f2"></div><svg style="position:absolute;left:352px;top:140px" width="11" height="7" viewBox="0 0 11 7"><path d="M0.5 0.5h10l-5 6z" fill="#d40000"/></svg><svg style="position:absolute;left:426px;top:120px" width="14" height="14" viewBox="0 0 14 14"><path d="M1.5 0v14" stroke="#8a9ac8" stroke-width="1.3"/><path d="M2 3h7M2 7h11M2 11h7" stroke="#7a9a7a" stroke-width="2"/></svg><div class="t" style="left:-21.0px;width:1000px;text-align:center;top:131.8px;font-size:16.8px;color:#000;font-weight:700;">Tool</div><div class="t" style="left:62.5px;width:1000px;text-align:center;top:131.8px;font-size:16.8px;color:#000;font-weight:700;">Data</div><div class="t" style="left:143.4px;width:1000px;text-align:center;top:131.8px;font-size:16.8px;color:#000;font-weight:700;">Plant</div><div class="t" style="left:206.5px;width:1000px;text-align:center;top:131.8px;font-size:16.8px;color:#000;font-weight:700;letter-spacing:-.4px">OOS</div><div class="t" style="left:-557.0px;width:1000px;text-align:right;top:157.1px;font-size:16.1px;color:#000;">1</div><div class="t" style="left:454.0px;top:157.1px;font-size:16.1px;color:#000;">E</div><div class="t" style="left:-392.0px;width:1000px;text-align:right;top:157.1px;font-size:16.1px;color:#000;">0,2514386...</div><div class="t" style="left:-331.0px;width:1000px;text-align:right;top:157.1px;font-size:16.1px;color:#000;">2</div><div class="t" style="left:-264.5px;width:1000px;text-align:right;top:157.1px;font-size:16.1px;color:#000;">1</div><div class="t" style="left:-557.0px;width:1000px;text-align:right;top:183.3px;font-size:16.1px;color:#000;">2</div><div class="t" style="left:454.0px;top:183.3px;font-size:16.1px;color:#000;">G</div><div class="t" style="left:-392.0px;width:1000px;text-align:right;top:183.3px;font-size:16.1px;color:#000;">4,0668465...</div><div class="t" style="left:-331.0px;width:1000px;text-align:right;top:183.3px;font-size:16.1px;color:#000;">3</div><div class="t" style="left:-264.5px;width:1000px;text-align:right;top:183.3px;font-size:16.1px;color:#000;">0</div><div class="t" style="left:-557.0px;width:1000px;text-align:right;top:209.5px;font-size:16.1px;color:#000;">3</div><div class="t" style="left:454.0px;top:209.5px;font-size:16.1px;color:#000;">A</div><div class="t" style="left:-392.0px;width:1000px;text-align:right;top:209.5px;font-size:16.1px;color:#000;">4,1682795...</div><div class="t" style="left:-331.0px;width:1000px;text-align:right;top:209.5px;font-size:16.1px;color:#000;">3</div><div class="t" style="left:-264.5px;width:1000px;text-align:right;top:209.5px;font-size:16.1px;color:#000;">0</div><div class="t" style="left:-557.0px;width:1000px;text-align:right;top:235.7px;font-size:16.1px;color:#000;">4</div><div class="t" style="left:454.0px;top:235.7px;font-size:16.1px;color:#000;">C</div><div class="t" style="left:-392.0px;width:1000px;text-align:right;top:235.7px;font-size:16.1px;color:#000;">5,8995347...</div><div class="t" style="left:-331.0px;width:1000px;text-align:right;top:235.7px;font-size:16.1px;color:#000;">1</div><div class="t" style="left:-264.5px;width:1000px;text-align:right;top:235.7px;font-size:16.1px;color:#000;">0</div><div class="t" style="left:-557.0px;width:1000px;text-align:right;top:262.0px;font-size:16.1px;color:#000;">5</div><div class="t" style="left:454.0px;top:262.0px;font-size:16.1px;color:#000;">C</div><div class="t" style="left:-392.0px;width:1000px;text-align:right;top:262.0px;font-size:16.1px;color:#000;">4,8127754...</div><div class="t" style="left:-331.0px;width:1000px;text-align:right;top:262.0px;font-size:16.1px;color:#000;">1</div><div class="t" style="left:-264.5px;width:1000px;text-align:right;top:262.0px;font-size:16.1px;color:#000;">0</div><div class="t" style="left:-557.0px;width:1000px;text-align:right;top:288.2px;font-size:16.1px;color:#000;">6</div><div class="t" style="left:454.0px;top:288.2px;font-size:16.1px;color:#000;">C</div><div class="t" style="left:-392.0px;width:1000px;text-align:right;top:288.2px;font-size:16.1px;color:#000;">5,9192040...</div><div class="t" style="left:-331.0px;width:1000px;text-align:right;top:288.2px;font-size:16.1px;color:#000;">3</div><div class="t" style="left:-264.5px;width:1000px;text-align:right;top:288.2px;font-size:16.1px;color:#000;">0</div><div class="t" style="left:-557.0px;width:1000px;text-align:right;top:314.4px;font-size:16.1px;color:#000;">7</div><div class="t" style="left:454.0px;top:314.4px;font-size:16.1px;color:#000;">G</div><div class="t" style="left:-392.0px;width:1000px;text-align:right;top:314.4px;font-size:16.1px;color:#000;">1,4697943...</div><div class="t" style="left:-331.0px;width:1000px;text-align:right;top:314.4px;font-size:16.1px;color:#000;">3</div><div class="t" style="left:-264.5px;width:1000px;text-align:right;top:314.4px;font-size:16.1px;color:#000;">1</div><div class="t" style="left:-557.0px;width:1000px;text-align:right;top:340.6px;font-size:16.1px;color:#000;">8</div><div class="t" style="left:454.0px;top:340.6px;font-size:16.1px;color:#000;">D</div><div class="t" style="left:-392.0px;width:1000px;text-align:right;top:340.6px;font-size:16.1px;color:#000;">-0,489051...</div><div class="t" style="left:-331.0px;width:1000px;text-align:right;top:340.6px;font-size:16.1px;color:#000;">1</div><div class="t" style="left:-264.5px;width:1000px;text-align:right;top:340.6px;font-size:16.1px;color:#000;">1</div><div class="t" style="left:-557.0px;width:1000px;text-align:right;top:366.8px;font-size:16.1px;color:#000;">9</div><div class="t" style="left:454.0px;top:366.8px;font-size:16.1px;color:#000;">B</div><div class="t" style="left:-392.0px;width:1000px;text-align:right;top:366.8px;font-size:16.1px;color:#000;">3,8342287...</div><div class="t" style="left:-331.0px;width:1000px;text-align:right;top:366.8px;font-size:16.1px;color:#000;">1</div><div class="t" style="left:-264.5px;width:1000px;text-align:right;top:366.8px;font-size:16.1px;color:#000;">0</div><div class="t" style="left:-557.0px;width:1000px;text-align:right;top:393.1px;font-size:16.1px;color:#000;">10</div><div class="t" style="left:454.0px;top:393.1px;font-size:16.1px;color:#000;">I</div><div class="t" style="left:-392.0px;width:1000px;text-align:right;top:393.1px;font-size:16.1px;color:#000;">5,8607064...</div><div class="t" style="left:-331.0px;width:1000px;text-align:right;top:393.1px;font-size:16.1px;color:#000;">3</div><div class="t" style="left:-264.5px;width:1000px;text-align:right;top:393.1px;font-size:16.1px;color:#000;">0</div><div class="t" style="left:-557.0px;width:1000px;text-align:right;top:419.3px;font-size:16.1px;color:#000;">11</div><div class="t" style="left:454.0px;top:419.3px;font-size:16.1px;color:#000;">C</div><div class="t" style="left:-392.0px;width:1000px;text-align:right;top:419.3px;font-size:16.1px;color:#000;">6,421100003</div><div class="t" style="left:-331.0px;width:1000px;text-align:right;top:419.3px;font-size:16.1px;color:#000;">1</div><div class="t" style="left:-264.5px;width:1000px;text-align:right;top:419.3px;font-size:16.1px;color:#000;">0</div>
<div class="r" style="left:937px;top:0;width:15px;height:1008px;background:linear-gradient(to right, rgba(0,0,0,0), rgba(0,0,0,.10))"></div><div class="r" style="left:952.0px;top:0.0px;width:970.0px;height:1.0px;background:#5a5a5a;"></div><div class="r" style="left:952.0px;top:0.0px;width:1.0px;height:1008.0px;background:#8a8a8a;"></div><div class="r" style="left:953.0px;top:1.0px;width:969.0px;height:37.0px;background:#fff;"></div><div class="t" style="left:988.3px;top:14.0px;font-size:14.4px;color:#8c8c8c;">heatmap_ex - Graph Builder - JMP Pro [2]</div><svg style="position:absolute;left:964px;top:11.0px" width="15" height="15" viewBox="0 0 15 15"><rect x=".6" y=".6" width="13.8" height="13.8" fill="#fff" stroke="#7a7a7a" stroke-width="1.2"/><path d="M7.5 .6v13.8M.6 7.5h13.8" stroke="#7a7a7a" stroke-width="1.2"/><path d="M2 4.3h1.6v2H2zM3.6 2.5h2.6v3.8H3.6z" fill="#6aaa3a"/><path d="M9 2.5h1.3v3.8H9zM9 5h4v1.3H9z" fill="#6aaa3a"/><path d="M2 9.2h1.4v3.6H2zM2 11.3h4.2v1.5H2z" fill="#6aaa3a"/><path d="M9 11h1.6v1.8H9zM10.6 9.2h2.6v3.6h-2.6z" fill="#6aaa3a"/></svg><div class="r" style="left:1781.0px;top:17.5px;width:12.0px;height:1.0px;background:#7a7a7a;"></div><div class="r" style="left:1839px;top:12.5px;width:10px;height:10px;border:1px solid #7a7a7a"></div><svg style="position:absolute;left:1898px;top:12.5px" width="13" height="13" viewBox="0 0 13 13"><path d="M.5 .5l12 12M12.5 .5l-12 12" stroke="#7a7a7a" stroke-width="1.1"/></svg><div class="r" style="left:953.0px;top:38.0px;width:969.0px;height:22.0px;background:#f0f0f0;"></div><div class="t" style="left:962.0px;top:42.9px;font-size:14.6px;color:#555;">File</div><div class="t" style="left:1002.2px;top:42.9px;font-size:14.6px;color:#555;">Edit</div><div class="t" style="left:1045.0px;top:42.9px;font-size:14.6px;color:#555;">Tables</div><div class="t" style="left:1103.0px;top:42.9px;font-size:14.6px;color:#555;">Rows</div><div class="t" style="left:1155.0px;top:42.9px;font-size:14.6px;color:#555;">Cols</div><div class="t" style="left:1200.5px;top:42.9px;font-size:14.6px;color:#555;">DOE</div><div class="t" style="left:1247.0px;top:42.9px;font-size:14.6px;color:#555;">Analyze</div><div class="t" style="left:1316.0px;top:42.9px;font-size:14.6px;color:#555;">Graph</div><div class="t" style="left:1373.0px;top:42.9px;font-size:14.6px;color:#555;">Tools</div><div class="t" style="left:1425.5px;top:42.9px;font-size:14.6px;color:#555;">Add-Ins</div><div class="t" style="left:1494.3px;top:42.9px;font-size:14.6px;color:#555;">View</div><div class="t" style="left:1543.3px;top:42.9px;font-size:14.6px;color:#555;">Window</div><div class="t" style="left:1615.4px;top:42.9px;font-size:14.6px;color:#555;">Help</div><div class="r" style="left:953.0px;top:60.0px;width:969.0px;height:33.0px;background:#d5dbed;"></div><div class="r" style="left:953.0px;top:93.0px;width:969.0px;height:1.0px;background:#9ba6cf;"></div><div class="r" style="left:957px;top:61px;width:278px;height:31px;background:#e9eef9;border-radius:5px"></div><div class="r" style="left:1207px;top:61px;width:1px;height:31px;background:#eef2fb"></div><div style="position:absolute;left:961px;top:66px;width:3px;height:3px;background:#5a5a5a"></div><div style="position:absolute;left:961px;top:71px;width:3px;height:3px;background:#5a5a5a"></div><div style="position:absolute;left:961px;top:76px;width:3px;height:3px;background:#5a5a5a"></div><div style="position:absolute;left:961px;top:81px;width:3px;height:3px;background:#5a5a5a"></div><svg style="position:absolute;left:967.5px;top:65.0px;opacity:1" width="22" height="22" viewBox="0 0 22 22"><rect x="2.4" y="3" width="17.6" height="16" fill="#fff" stroke="#1f5fb0" stroke-width="1.6"/><path d="M3 7.5h16M3 12h16M3 16h16" stroke="#f3a0a0" stroke-width=".8"/><path d="M8 4v14M12.5 4v14M16.5 4v14" stroke="#c0d0e8" stroke-width="1"/><circle cx="13.5" cy="10" r="2" fill="#111"/><path d="M16.5 11l1.1 3.4 3.4 1.1-3.4 1.1-1.1 3.4-1.1-3.4-3.4-1.1 3.4-1.1z" fill="#2a8ad8"/><rect x="1.2" y="1" width="9.3" height="9.3" fill="#efc535"/><path d="M5.85 1.2v8.9M1.4 5.65h8.9M2.2 2l7.3 7.3M9.5 2L2.2 9.3" stroke="#fbeaa0" stroke-width=".9"/><circle cx="5.85" cy="5.65" r="1.8" fill="#fffbe8"/></svg><svg style="position:absolute;left:994.8px;top:65.0px;opacity:1" width="22" height="22" viewBox="0 0 22 22"><defs><linearGradient id="pgg" x1="0" y1="0" x2="1" y2="1"><stop offset="0" stop-color="#fff"/><stop offset="1" stop-color="#c8dcf4"/></linearGradient></defs><path d="M6.5 3.5h9l5 5v12h-14z" fill="url(#pgg)" stroke="#2a6bb8" stroke-width="1.4"/><path d="M15.5 3.5v5h5" fill="#fff" stroke="#2a6bb8" stroke-width="1"/><circle cx="5.5" cy="16" r="3.2" fill="none" stroke="#7a7a7a" stroke-width="1.8"/><path d="M7.5 12.5h8.5" stroke="#666" stroke-width="2"/><rect x="1.2" y="1" width="9.3" height="9.3" fill="#efc535"/><path d="M5.85 1.2v8.9M1.4 5.65h8.9M2.2 2l7.3 7.3M9.5 2L2.2 9.3" stroke="#fbeaa0" stroke-width=".9"/><circle cx="5.85" cy="5.65" r="1.8" fill="#fffbe8"/></svg><svg style="position:absolute;left:1022.0px;top:65.0px;opacity:1" width="22" height="22" viewBox="0 0 22 22"><path d="M2.5 5h6l2 2h6v12h-14z" fill="#d8bc68" stroke="#9a8040" stroke-width=".8"/><path d="M5 10h15.5l-3 9.5H2.5z" fill="#f4c232" stroke="#b08020" stroke-width=".8"/><path d="M12.5 6C13.5 2.5 17.5 1.5 19.5 4" fill="none" stroke="#2a5aa0" stroke-width="1.6"/><path d="M21.2 2l-.2 5-4-1.2z" fill="#2a5aa0"/></svg><svg style="position:absolute;left:1048.7px;top:65.0px;opacity:1" width="22" height="22" viewBox="0 0 22 22"><defs><linearGradient id="svg_" x1="0" y1="0" x2="1" y2="1"><stop offset="0" stop-color="#7a7ae8"/><stop offset="1" stop-color="#3a3aa8"/></linearGradient></defs><rect x="2.5" y="2" width="18" height="18" rx="1.5" fill="url(#svg_)"/><rect x="6" y="3" width="11" height="7.5" fill="#f8f8ff"/><rect x="6.5" y="14" width="9.5" height="6" fill="#1a1a2a"/><rect x="10.5" y="15.5" width="3.5" height="3.5" fill="#e8e8e8"/></svg><svg style="position:absolute;left:1082.5px;top:65.0px;opacity:0.3" width="22" height="22" viewBox="0 0 22 22"><path d="M7 2l5.5 12M15 2l-5.5 12" stroke="#6a8ac8" stroke-width="1.6"/><circle cx="8" cy="16.5" r="2.6" fill="none" stroke="#5a7ac0" stroke-width="1.8"/><circle cx="14" cy="16.5" r="2.6" fill="none" stroke="#5a7ac0" stroke-width="1.8"/></svg><svg style="position:absolute;left:1108.5px;top:65.0px;opacity:1" width="22" height="22" viewBox="0 0 22 22"><path d="M2 2.5h7l2.5 2.5v10H2z" fill="#f4f8ff" stroke="#3a6ac8" stroke-width="1.1"/><path d="M9 6.5h8l3 3v9H9z" fill="#eef4ff" stroke="#2a5ac0" stroke-width="1.3"/><path d="M4 6h4.5M4 8.5h4.5M4 11h4.5M11 11h7M11 13.5h7M11 16h7" stroke="#3a6ac8" stroke-width="1"/></svg><svg style="position:absolute;left:1135.8px;top:65.0px;opacity:1" width="22" height="22" viewBox="0 0 22 22"><defs><linearGradient id="pst" x1="0" y1="0" x2="1" y2="1"><stop offset="0" stop-color="#fce27a"/><stop offset="1" stop-color="#e0a010"/></linearGradient></defs><rect x="1.5" y="3" width="15" height="14" rx="1" fill="url(#pst)" stroke="#a07820" stroke-width="1"/><path d="M6 1.5h6v3H6z" fill="#e4d49a" stroke="#806020" stroke-width=".8"/><path d="M10 9h8l3 3v7H10z" fill="#dde4f0" stroke="#4a4a50" stroke-width="1.1"/><path d="M12 13h5M12 15.5h6" stroke="#7a8aa8" stroke-width="1"/></svg><svg style="position:absolute;left:1168.9px;top:65.0px;opacity:1" width="22" height="22" viewBox="0 0 22 22"><rect x="2.2" y="2" width="18" height="18" rx="2" fill="#fff" stroke="#555" stroke-width="1.8"/><path d="M6 7.5h11M5 14.5h11" stroke="#8a8a8a" stroke-width="1.5"/><ellipse cx="8.5" cy="7.5" rx="2" ry="2.8" fill="#fff" stroke="#777" stroke-width="1.4"/><ellipse cx="13.5" cy="14.5" rx="2" ry="2.8" fill="#fff" stroke="#777" stroke-width="1.4"/></svg><svg style="position:absolute;left:1196.2px;top:65.0px;opacity:1" width="22" height="22" viewBox="0 0 22 22"><rect x="3.5" y="10" width="14" height="10" rx="1" fill="none" stroke="#c4c4c4" stroke-width="1.5"/><path d="M6.5 10V6a4 4 0 0 1 8 0v4" fill="none" stroke="#c4c4c4" stroke-width="1.5"/></svg><div class="r" style="left:1075.3px;top:65.0px;width:1.0px;height:22.0px;background:#7a7a7a;"></div><div class="r" style="left:1163.2px;top:65.0px;width:1.0px;height:22.0px;background:#7a7a7a;"></div><svg style="position:absolute;left:1224.3px;top:80px" width="9" height="9" viewBox="0 0 9 9"><path d="M1 1h7" stroke="#555" stroke-width="1.3"/><path d="M.5 3.5h8l-4 4z" fill="#555"/></svg><div class="r" style="left:1241px;top:61px;width:104.29999999999995px;height:31px;background:#e9eef9;border-radius:5px"></div><div class="r" style="left:1317.3px;top:61px;width:1px;height:31px;background:#eef2fb"></div><div style="position:absolute;left:1245.5px;top:66px;width:3px;height:3px;background:#5a5a5a"></div><div style="position:absolute;left:1245.5px;top:71px;width:3px;height:3px;background:#5a5a5a"></div><div style="position:absolute;left:1245.5px;top:76px;width:3px;height:3px;background:#5a5a5a"></div><div style="position:absolute;left:1245.5px;top:81px;width:3px;height:3px;background:#5a5a5a"></div><svg style="position:absolute;left:1251.6px;top:65.0px;opacity:1.0" width="22" height="22" viewBox="0 0 22 22"><path d="M2.5 1.5h13l4 4v14h-17z" fill="#d4dff2" stroke="#8a9ac0" stroke-width="1"/><path d="M3 6h16M3 10.5h16M3 15h16M7 2v17M11.5 2v17M16 2v17" stroke="#fff" stroke-width=".8"/><rect x="5.5" y="5" width="10" height="8.5" fill="#f07010" stroke="#c05000" stroke-width=".6"/><rect x="8" y="7" width="2" height="4.5" fill="#ffe000"/><rect x="11.5" y="7" width="2" height="4.5" fill="#ffe000"/><path d="M6.5 1.5v18" stroke="#e03030" stroke-width="1"/></svg><svg style="position:absolute;left:1278.0px;top:65.0px;opacity:1.0" width="22" height="22" viewBox="0 0 22 22"><rect x="2" y="7" width="6.5" height="13.5" fill="#e8ecf0" stroke="#5a6270" stroke-width="1.3"/><rect x="14" y="7" width="6.5" height="13.5" fill="#e8ecf0" stroke="#5a6270" stroke-width="1.3"/><path d="M4.2 10h2M4.2 13h2M4.2 16h2M16.2 10h2M16.2 13h2M16.2 16h2" stroke="#556" stroke-width="1"/><path d="M5 5Q11 0 17 5" fill="none" stroke="#111" stroke-width="1.6"/><path d="M2.5 6.5l4-3 .3 3.8zM19.5 6.5l-4-3-.3 3.8z" fill="#111"/></svg><svg style="position:absolute;left:1305.7px;top:65.0px;opacity:1.0" width="22" height="22" viewBox="0 0 22 22"><rect x="4" y="1.5" width="15" height="11" fill="#e8f0fa" stroke="#2a60b0" stroke-width="1.3"/><path d="M1 3l6 4-6 4z" fill="#3cb048"/><circle cx="10" cy="4.5" r="1.3" fill="#222"/><path d="M11 6l2 3 3-1-2 3" stroke="#3a9ae0" stroke-width="1.6" fill="none"/><path d="M15 10.5v10.5M9.5 15.75h11" stroke="#2e9a30" stroke-width="3.6"/></svg><svg style="position:absolute;left:1334.3px;top:80px" width="9" height="9" viewBox="0 0 9 9"><path d="M1 1h7" stroke="#555" stroke-width="1.3"/><path d="M.5 3.5h8l-4 4z" fill="#555"/></svg><div class="r" style="left:1351px;top:61px;width:413.70000000000005px;height:31px;background:#e9eef9;border-radius:5px"></div><div class="r" style="left:1736.7px;top:61px;width:1px;height:31px;background:#eef2fb"></div><div style="position:absolute;left:1354.7px;top:66px;width:3px;height:3px;background:#5a5a5a"></div><div style="position:absolute;left:1354.7px;top:71px;width:3px;height:3px;background:#5a5a5a"></div><div style="position:absolute;left:1354.7px;top:76px;width:3px;height:3px;background:#5a5a5a"></div><div style="position:absolute;left:1354.7px;top:81px;width:3px;height:3px;background:#5a5a5a"></div><div class="r" style="left:1360.0px;top:63.0px;width:25.0px;height:27.0px;background:#b2d4f8;"></div><svg style="position:absolute;left:1360.8px;top:65.0px;opacity:1.0" width="22" height="22" viewBox="0 0 22 22"><path d="M6.5 1.5v15l3.5-3.5 3 5.5 2.2-1.2-3-5.5h4.8z" fill="#fff" stroke="#2a58c0" stroke-width="1.3" stroke-linejoin="round"/></svg><svg style="position:absolute;left:1389.0px;top:65.0px;opacity:1.0" width="22" height="22" viewBox="0 0 22 22"><path d="M6.2 7.2c0-3 2.5-4.7 5-4.7 3 0 5 1.8 5 4.2 0 3-4.2 3.3-4.5 6.5" fill="none" stroke="#2a58c0" stroke-width="3"/><circle cx="11.6" cy="17" r="2" fill="#2a58c0"/></svg><svg style="position:absolute;left:1415.0px;top:65.0px;opacity:1.0" width="22" height="22" viewBox="0 0 22 22"><path d="M9 2.5h5v6h6v5h-6v6H9v-6H3v-5h6z" fill="#eef4ff" stroke="#2a58c0" stroke-width="1.7" stroke-linejoin="round"/><rect x="10.5" y="10" width="2" height="2" fill="#2a58c0"/></svg><svg style="position:absolute;left:1442.4px;top:65.0px;opacity:1.0" width="22" height="22" viewBox="0 0 22 22"><circle cx="11" cy="10.5" r="8" fill="#e8f0fc" stroke="#2a58c0" stroke-width="1.7"/><circle cx="11" cy="10.5" r="5" fill="none" stroke="#2a58c0" stroke-width="1"/><path d="M11 3.5l2.2 2.8h-4.4zM11 17.5l2.2-2.8h-4.4zM4 10.5l2.8-2.2v4.4zM18 10.5l-2.8-2.2v4.4z" fill="#2a58c0"/><circle cx="11" cy="10.5" r="1.2" fill="#2a58c0"/></svg><svg style="position:absolute;left:1475.6px;top:65.0px;opacity:1.0" width="22" height="22" viewBox="0 0 22 22"><defs><linearGradient id="hnd" x1="0" y1="0" x2="0" y2="1"><stop offset="0" stop-color="#d8e4f8"/><stop offset="1" stop-color="#fff"/></linearGradient></defs><path d="M4.5 16.5L1.8 11.5a1.3 1.3 0 0 1 2.2-1.3L6 13V4.5a1.4 1.4 0 0 1 2.8 0V10V2.8a1.4 1.4 0 0 1 2.8 0V10V3.5a1.4 1.4 0 0 1 2.8 0V10.5V6a1.4 1.4 0 0 1 2.8 0V13c0 3-1.5 5.5-4 5.5H8c-1.5 0-2.5-1-3.5-2z" fill="url(#hnd)" stroke="#2848b0" stroke-width="1.2" stroke-linejoin="round"/></svg><svg style="position:absolute;left:1503.0px;top:65.0px;opacity:1.0" width="22" height="22" viewBox="0 0 22 22"><path d="M12.5 8.5l6-6" stroke="#d09a20" stroke-width="3.2"/><path d="M2 11c2 .5 3.5-1 5.5-3l5 4.5c-1.5 3-4 4.5-6.5 4.5S1.5 15 2 11z" fill="#2a68d8"/><path d="M7.5 8l5 4.5 2-2-5-4.5z" fill="#3050a0"/></svg><svg style="position:absolute;left:1530.4px;top:65.0px;opacity:1.0" width="22" height="22" viewBox="0 0 22 22"><ellipse cx="13.5" cy="7.5" rx="5.5" ry="4" fill="none" stroke="#2848b0" stroke-width="1.6"/><path d="M9.5 10c-2 1.5-2 3.5-.5 4.5M9 14.5l-5.5 4" fill="none" stroke="#2848b0" stroke-width="1.6"/></svg><svg style="position:absolute;left:1557.0px;top:65.0px;opacity:1.0" width="22" height="22" viewBox="0 0 22 22"><path d="M11.5 11.5l7 7" stroke="#c08a20" stroke-width="3"/><circle cx="8" cy="8" r="5.5" fill="#f0f6ff" stroke="#2a58c0" stroke-width="1.7"/></svg><svg style="position:absolute;left:1584.0px;top:65.0px;opacity:1.0" width="22" height="22" viewBox="0 0 22 22"><path d="M10.8 2v15M3 9.5h15.5" stroke="#1f40b0" stroke-width="2.4"/></svg><svg style="position:absolute;left:1610.9px;top:65.0px;opacity:1.0" width="22" height="22" viewBox="0 0 22 22"><path d="M2.5 16.5L16.5 2.5l3.5 3.5L6 20z" fill="#eef2fb" stroke="#2848b0" stroke-width="1.5" stroke-linejoin="round"/></svg><svg style="position:absolute;left:1643.3px;top:65.0px;opacity:1.0" width="22" height="22" viewBox="0 0 22 22"><defs><linearGradient id="tbx" x1="0" y1="0" x2="0" y2="1"><stop offset="0" stop-color="#fff"/><stop offset="1" stop-color="#cfd9ea"/></linearGradient></defs><rect x="2.2" y="2.5" width="17.5" height="16" fill="url(#tbx)" stroke="#2a58c0" stroke-width="1.4"/><path d="M11 6h8M11 9h8M4 13h15M4 16h15" stroke="#c8d4e8" stroke-width="1"/><path d="M4.2 4.8h7v2.2h-2.4v5.5H6.6V7H4.2z" fill="#1f3f90"/></svg><svg style="position:absolute;left:1671.0px;top:65.0px;opacity:1.0" width="22" height="22" viewBox="0 0 22 22"><rect x="2" y="3.5" width="17.5" height="3.5" fill="#0a2a9a"/><rect x="2" y="9.5" width="17.5" height="1.5" fill="#0a2a9a"/><rect x="2" y="14.5" width="15" height="1.6" fill="#0a2a9a"/><path d="M16 12l5 3.3-5 3.3z" fill="#0a2a9a"/></svg><svg style="position:absolute;left:1697.6px;top:65.0px;opacity:1.0" width="22" height="22" viewBox="0 0 22 22"><path d="M2.5 8L7.5 2.5h7.5l1 3 4 7-4.5 6H2.5z" fill="#eef4fc" stroke="#2a58c0" stroke-width="1.4" stroke-linejoin="round"/></svg><svg style="position:absolute;left:1725.0px;top:65.0px;opacity:1.0" width="22" height="22" viewBox="0 0 22 22"><ellipse cx="11.5" cy="11" rx="9" ry="5.8" fill="#eef4fc" stroke="#2a58c0" stroke-width="1.5"/></svg><div class="r" style="left:1469.6px;top:65.0px;width:1.0px;height:22.0px;background:#7a7a7a;"></div><div class="r" style="left:1637.3px;top:65.0px;width:1.0px;height:22.0px;background:#7a7a7a;"></div><svg style="position:absolute;left:1753.7px;top:80px" width="9" height="9" viewBox="0 0 9 9"><path d="M1 1h7" stroke="#555" stroke-width="1.3"/><path d="M.5 3.5h8l-4 4z" fill="#555"/></svg><div class="r" style="left:953.0px;top:94.0px;width:969.0px;height:886.0px;background:#f8f8f8;"></div><svg style="position:absolute;left:956.5px;top:112.5px" width="12" height="12" viewBox="0 0 12 12"><path d="M.5 11.5L11.5 .5v11z" fill="#b8b8b8" stroke="#888" stroke-width=".8"/></svg><div class="r" style="left:969.5px;top:104.5px;width:951.5px;height:27.0px;background:#ececec;border:1px solid #c4c4c4;border-right:none"></div><div class="r" style="left:974.0px;top:111.0px;width:15px;height:13px;border:1px solid #c4c4c4;border-radius:3px;background:#f2f2f2"></div><svg style="position:absolute;left:977.0px;top:115.0px" width="11" height="7" viewBox="0 0 11 7"><path d="M0.5 0.5h10l-5 6z" fill="#d40000"/></svg><div class="t" style="left:995.0px;top:111.1px;font-size:19.4px;color:#000;font-weight:700;">Graph Builder</div><div class="t" style="left:917.0px;width:1000px;text-align:center;top:140.1px;font-size:20px;color:#000;font-weight:700;">Tool vs. Plant</div><div class="t" style="left:10.0px;width:1000px;text-align:right;top:206.9px;font-size:16px;color:#000;">I</div><div class="t" style="left:10.0px;width:1000px;text-align:right;top:302.3px;font-size:16px;color:#000;">H</div><div class="t" style="left:10.0px;width:1000px;text-align:right;top:397.7px;font-size:16px;color:#000;">G</div><div class="t" style="left:10.0px;width:1000px;text-align:right;top:493.1px;font-size:16px;color:#000;">E</div><div class="t" style="left:10.0px;width:1000px;text-align:right;top:588.4px;font-size:16px;color:#000;">D</div><div class="t" style="left:10.0px;width:1000px;text-align:right;top:683.8px;font-size:16px;color:#000;">C</div><div class="t" style="left:10.0px;width:1000px;text-align:right;top:779.2px;font-size:16px;color:#000;">B</div><div class="t" style="left:10.0px;width:1000px;text-align:right;top:874.6px;font-size:16px;color:#000;">A</div><svg style="position:absolute;left:1013px;top:165px" width="856" height="765" viewBox="1013 165 856 765"><rect x="1014" y="166" width="854" height="763" fill="#fff"/><rect x="1156" y="166" width="1" height="763" fill="#d6d6d6"/><rect x="1441" y="166" width="1" height="763" fill="#d6d6d6"/><rect x="1726" y="166" width="1" height="763" fill="#d6d6d6"/><rect x="1014" y="214" width="854" height="1" fill="#d6d6d6"/><rect x="1014" y="309" width="854" height="1" fill="#d6d6d6"/><rect x="1014" y="404" width="854" height="1" fill="#d6d6d6"/><rect x="1014" y="500" width="854" height="1" fill="#d6d6d6"/><rect x="1014" y="595" width="854" height="1" fill="#d6d6d6"/><rect x="1014" y="691" width="854" height="1" fill="#d6d6d6"/><rect x="1014" y="786" width="854" height="1" fill="#d6d6d6"/><rect x="1014" y="881" width="854" height="1" fill="#d6d6d6"/><rect x="1014.00" y="166.00" width="284.67" height="95.38" fill="#21728f"/><rect x="1298.67" y="166.00" width="284.67" height="95.38" fill="#21728f"/><rect x="1583.33" y="166.00" width="284.67" height="95.38" fill="#21728f"/><rect x="1014.00" y="261.38" width="284.67" height="95.38" fill="#f2a41f"/><rect x="1583.33" y="261.38" width="284.67" height="95.38" fill="#21728f"/><rect x="1298.67" y="356.75" width="284.67" height="95.38" fill="#f2a41f"/><rect x="1583.33" y="356.75" width="284.67" height="95.38" fill="#898955"/><rect x="1298.67" y="452.12" width="284.67" height="95.38" fill="#f2a41f"/><rect x="1014.00" y="547.50" width="284.67" height="95.38" fill="#f2a41f"/><rect x="1298.67" y="547.50" width="284.67" height="95.38" fill="#21728f"/><rect x="1583.33" y="547.50" width="284.67" height="95.38" fill="#21728f"/><rect x="1014.00" y="642.88" width="284.67" height="95.38" fill="#21728f"/><rect x="1583.33" y="642.88" width="284.67" height="95.38" fill="#21728f"/><rect x="1014.00" y="738.25" width="284.67" height="95.38" fill="#ab9445"/><rect x="1298.67" y="738.25" width="284.67" height="95.38" fill="#898955"/><rect x="1583.33" y="833.62" width="284.67" height="95.38" fill="#21728f"/><rect x="1298.17" y="166" width="1" height="763" fill="rgba(255,255,255,.10)"/><rect x="1582.83" y="166" width="1" height="763" fill="rgba(255,255,255,.10)"/><rect x="1014" y="260.88" width="854" height="1" fill="rgba(255,255,255,.10)"/><rect x="1014" y="356.25" width="854" height="1" fill="rgba(255,255,255,.10)"/><rect x="1014" y="451.62" width="854" height="1" fill="rgba(255,255,255,.10)"/><rect x="1014" y="547.00" width="854" height="1" fill="rgba(255,255,255,.10)"/><rect x="1014" y="642.38" width="854" height="1" fill="rgba(255,255,255,.10)"/><rect x="1014" y="737.75" width="854" height="1" fill="rgba(255,255,255,.10)"/><rect x="1014" y="833.12" width="854" height="1" fill="rgba(255,255,255,.10)"/><rect x="1013" y="165" width="1" height="765" fill="#a0a0a0"/><rect x="1013" y="929" width="856" height="1" fill="#a0a0a0"/><rect x="1868" y="165" width="1" height="765" fill="#a8a8a8"/><rect x="1013" y="165" width="856" height="1" fill="#d8d0cc"/></svg><div class="t" style="left:655.3px;width:1000px;text-align:center;top:935.0px;font-size:16px;color:#000;">1</div><div class="t" style="left:940.0px;width:1000px;text-align:center;top:935.0px;font-size:16px;color:#000;">2</div><div class="t" style="left:1224.7px;width:1000px;text-align:center;top:935.0px;font-size:16px;color:#000;">3</div><div class="t" style="left:939.0px;width:1000px;text-align:center;top:959.0px;font-size:16px;color:#000;">Plant</div><div class="t" style="left:480.0px;width:1000px;text-align:center;top:538.0px;font-size:16px;color:#000;transform:rotate(-90deg);transform-origin:500px 8.0px">Tool</div><div class="t" style="left:1875.5px;top:179.0px;font-size:16px;color:#000;">OOS</div><div class="r" style="left:1875.0px;top:205.0px;width:25.0px;height:16.0px;background:#21728f;"></div><div class="r" style="left:1875.0px;top:226.0px;width:25.0px;height:16.5px;background:#f2a41f;"></div><div class="t" style="left:1904.5px;top:206.0px;font-size:16px;color:#000;">0</div><div class="t" style="left:1904.5px;top:227.0px;font-size:16px;color:#000;">1</div><div class="r" style="left:953.0px;top:980.0px;width:969.0px;height:1.5px;background:#8d9ccc;"></div><div class="r" style="left:953.0px;top:981.5px;width:969.0px;height:1.5px;background:#fbfcfe;"></div><div class="r" style="left:953.0px;top:983.0px;width:969.0px;height:24.0px;background:#dfe6f0;"></div><div class="r" style="left:952.0px;top:1007.0px;width:970.0px;height:1.0px;background:#555;"></div><div class="r" style="left:1812.5px;top:983.0px;width:1.0px;height:22.0px;background:#a0a8b8;"></div><svg style="position:absolute;left:1819.5px;top:985px" width="17" height="16" viewBox="0 0 17 16"><path d="M8.5 1L1 8h2v7.5h11V8h2z" fill="#eef6fc" stroke="#3a9ad8" stroke-width="1.4" stroke-linejoin="round"/><rect x="7" y="9" width="3.5" height="6.5" fill="#a06a18"/></svg><svg style="position:absolute;left:1839.5px;top:985px" width="16" height="15" viewBox="0 0 16 15"><rect x=".7" y=".7" width="13" height="11" fill="#fff" stroke="#1f5fb0" stroke-width="1.3"/><path d="M1 4.5h13M1 8h13M4.5 1v11M8 1v11M11 1v11" stroke="#e87878" stroke-width=".6"/><circle cx="9" cy="6" r="1.4" fill="#111"/><path d="M9 8l5 3M12 7l-1.5 7.5" stroke="#2a8ad8" stroke-width="1.5"/></svg><div class="r" style="left:1869.5px;top:986px;width:14px;height:14px;border:1px solid #555;background:#fff"></div><svg style="position:absolute;left:1870.5px;top:987px" width="14" height="14" viewBox="0 0 14 14"><path d="M2.2 7.2l3.2 3.6 6.2-8" fill="none" stroke="#1a1a1a" stroke-width="2.6"/></svg><svg style="position:absolute;left:1892.5px;top:989px" width="11" height="8" viewBox="0 0 11 8"><path d="M0.5 .5h10l-5 7z" fill="#000"/></svg>
<div class="r" style="left:36px;top:423px;width:920px;height:544px;box-shadow:0 0 14px 3px rgba(0,0,0,.22)"></div><div class="r" style="left:36.0px;top:423.0px;width:920.0px;height:544.0px;background:#f7f7f7;"></div><div class="r" style="left:36.0px;top:423.0px;width:920.0px;height:1.0px;background:#606060;"></div><div class="r" style="left:36.0px;top:423.0px;width:1.0px;height:544.0px;background:#606060;"></div><div class="r" style="left:955.0px;top:423.0px;width:1.0px;height:544.0px;background:#606060;"></div><div class="r" style="left:37.0px;top:424.0px;width:918.0px;height:37.0px;background:#fff;"></div><div class="t" style="left:72.3px;top:436.0px;font-size:14.4px;color:#000;">heatmap_ex - Graph Builder 2 - JMP Pro [2]</div><svg style="position:absolute;left:48px;top:433.5px" width="15" height="15" viewBox="0 0 15 15"><rect x=".6" y=".6" width="13.8" height="13.8" fill="#fff" stroke="#7a7a7a" stroke-width="1.2"/><path d="M7.5 .6v13.8M.6 7.5h13.8" stroke="#7a7a7a" stroke-width="1.2"/><path d="M2 4.3h1.6v2H2zM3.6 2.5h2.6v3.8H3.6z" fill="#6aaa3a"/><path d="M9 2.5h1.3v3.8H9zM9 5h4v1.3H9z" fill="#6aaa3a"/><path d="M2 9.2h1.4v3.6H2zM2 11.3h4.2v1.5H2z" fill="#6aaa3a"/><path d="M9 11h1.6v1.8H9zM10.6 9.2h2.6v3.6h-2.6z" fill="#6aaa3a"/></svg><div class="r" style="left:802.0px;top:440.5px;width:12.0px;height:1.0px;background:#111;"></div><div class="r" style="left:860px;top:435.5px;width:10px;height:10px;border:1px solid #111"></div><svg style="position:absolute;left:919px;top:435.5px" width="13" height="13" viewBox="0 0 13 13"><path d="M.5 .5l12 12M12.5 .5l-12 12" stroke="#111" stroke-width="1.1"/></svg><div class="r" style="left:37.0px;top:461.0px;width:918.0px;height:22.0px;background:#f0f0f0;"></div><div class="t" style="left:46.0px;top:465.9px;font-size:14.6px;color:#000;">File</div><div class="t" style="left:86.2px;top:465.9px;font-size:14.6px;color:#000;">Edit</div><div class="t" style="left:129.0px;top:465.9px;font-size:14.6px;color:#000;">Tables</div><div class="t" style="left:187.0px;top:465.9px;font-size:14.6px;color:#000;">Rows</div><div class="t" style="left:239.0px;top:465.9px;font-size:14.6px;color:#000;">Cols</div><div class="t" style="left:284.5px;top:465.9px;font-size:14.6px;color:#000;">DOE</div><div class="t" style="left:331.0px;top:465.9px;font-size:14.6px;color:#000;">Analyze</div><div class="t" style="left:400.0px;top:465.9px;font-size:14.6px;color:#000;">Graph</div><div class="t" style="left:457.0px;top:465.9px;font-size:14.6px;color:#000;">Tools</div><div class="t" style="left:509.5px;top:465.9px;font-size:14.6px;color:#000;">Add-Ins</div><div class="t" style="left:578.3px;top:465.9px;font-size:14.6px;color:#000;">View</div><div class="t" style="left:627.3px;top:465.9px;font-size:14.6px;color:#000;">Window</div><div class="t" style="left:699.4px;top:465.9px;font-size:14.6px;color:#000;">Help</div><div class="r" style="left:37.0px;top:483.0px;width:918.0px;height:33.0px;background:#d5dbed;"></div><div class="r" style="left:37.0px;top:516.0px;width:918.0px;height:1.0px;background:#9ba6cf;"></div><div class="r" style="left:41px;top:484px;width:278px;height:31px;background:#e9eef9;border-radius:5px"></div><div class="r" style="left:291px;top:484px;width:1px;height:31px;background:#eef2fb"></div><div style="position:absolute;left:45px;top:489px;width:3px;height:3px;background:#5a5a5a"></div><div style="position:absolute;left:45px;top:494px;width:3px;height:3px;background:#5a5a5a"></div><div style="position:absolute;left:45px;top:499px;width:3px;height:3px;background:#5a5a5a"></div><div style="position:absolute;left:45px;top:504px;width:3px;height:3px;background:#5a5a5a"></div><svg style="position:absolute;left:51.5px;top:488.0px;opacity:1" width="22" height="22" viewBox="0 0 22 22"><rect x="2.4" y="3" width="17.6" height="16" fill="#fff" stroke="#1f5fb0" stroke-width="1.6"/><path d="M3 7.5h16M3 12h16M3 16h16" stroke="#f3a0a0" stroke-width=".8"/><path d="M8 4v14M12.5 4v14M16.5 4v14" stroke="#c0d0e8" stroke-width="1"/><circle cx="13.5" cy="10" r="2" fill="#111"/><path d="M16.5 11l1.1 3.4 3.4 1.1-3.4 1.1-1.1 3.4-1.1-3.4-3.4-1.1 3.4-1.1z" fill="#2a8ad8"/><rect x="1.2" y="1" width="9.3" height="9.3" fill="#efc535"/><path d="M5.85 1.2v8.9M1.4 5.65h8.9M2.2 2l7.3 7.3M9.5 2L2.2 9.3" stroke="#fbeaa0" stroke-width=".9"/><circle cx="5.85" cy="5.65" r="1.8" fill="#fffbe8"/></svg><svg style="position:absolute;left:78.8px;top:488.0px;opacity:1" width="22" height="22" viewBox="0 0 22 22"><defs><linearGradient id="pgg" x1="0" y1="0" x2="1" y2="1"><stop offset="0" stop-color="#fff"/><stop offset="1" stop-color="#c8dcf4"/></linearGradient></defs><path d="M6.5 3.5h9l5 5v12h-14z" fill="url(#pgg)" stroke="#2a6bb8" stroke-width="1.4"/><path d="M15.5 3.5v5h5" fill="#fff" stroke="#2a6bb8" stroke-width="1"/><circle cx="5.5" cy="16" r="3.2" fill="none" stroke="#7a7a7a" stroke-width="1.8"/><path d="M7.5 12.5h8.5" stroke="#666" stroke-width="2"/><rect x="1.2" y="1" width="9.3" height="9.3" fill="#efc535"/><path d="M5.85 1.2v8.9M1.4 5.65h8.9M2.2 2l7.3 7.3M9.5 2L2.2 9.3" stroke="#fbeaa0" stroke-width=".9"/><circle cx="5.85" cy="5.65" r="1.8" fill="#fffbe8"/></svg><svg style="position:absolute;left:106.0px;top:488.0px;opacity:1" width="22" height="22" viewBox="0 0 22 22"><path d="M2.5 5h6l2 2h6v12h-14z" fill="#d8bc68" stroke="#9a8040" stroke-width=".8"/><path d="M5 10h15.5l-3 9.5H2.5z" fill="#f4c232" stroke="#b08020" stroke-width=".8"/><path d="M12.5 6C13.5 2.5 17.5 1.5 19.5 4" fill="none" stroke="#2a5aa0" stroke-width="1.6"/><path d="M21.2 2l-.2 5-4-1.2z" fill="#2a5aa0"/></svg><svg style="position:absolute;left:132.7px;top:488.0px;opacity:1" width="22" height="22" viewBox="0 0 22 22"><defs><linearGradient id="svg_" x1="0" y1="0" x2="1" y2="1"><stop offset="0" stop-color="#7a7ae8"/><stop offset="1" stop-color="#3a3aa8"/></linearGradient></defs><rect x="2.5" y="2" width="18" height="18" rx="1.5" fill="url(#svg_)"/><rect x="6" y="3" width="11" height="7.5" fill="#f8f8ff"/><rect x="6.5" y="14" width="9.5" height="6" fill="#1a1a2a"/><rect x="10.5" y="15.5" width="3.5" height="3.5" fill="#e8e8e8"/></svg><svg style="position:absolute;left:166.5px;top:488.0px;opacity:0.3" width="22" height="22" viewBox="0 0 22 22"><path d="M7 2l5.5 12M15 2l-5.5 12" stroke="#6a8ac8" stroke-width="1.6"/><circle cx="8" cy="16.5" r="2.6" fill="none" stroke="#5a7ac0" stroke-width="1.8"/><circle cx="14" cy="16.5" r="2.6" fill="none" stroke="#5a7ac0" stroke-width="1.8"/></svg><svg style="position:absolute;left:192.5px;top:488.0px;opacity:1" width="22" height="22" viewBox="0 0 22 22"><path d="M2 2.5h7l2.5 2.5v10H2z" fill="#f4f8ff" stroke="#3a6ac8" stroke-width="1.1"/><path d="M9 6.5h8l3 3v9H9z" fill="#eef4ff" stroke="#2a5ac0" stroke-width="1.3"/><path d="M4 6h4.5M4 8.5h4.5M4 11h4.5M11 11h7M11 13.5h7M11 16h7" stroke="#3a6ac8" stroke-width="1"/></svg><svg style="position:absolute;left:219.8px;top:488.0px;opacity:1" width="22" height="22" viewBox="0 0 22 22"><defs><linearGradient id="pst" x1="0" y1="0" x2="1" y2="1"><stop offset="0" stop-color="#fce27a"/><stop offset="1" stop-color="#e0a010"/></linearGradient></defs><rect x="1.5" y="3" width="15" height="14" rx="1" fill="url(#pst)" stroke="#a07820" stroke-width="1"/><path d="M6 1.5h6v3H6z" fill="#e4d49a" stroke="#806020" stroke-width=".8"/><path d="M10 9h8l3 3v7H10z" fill="#dde4f0" stroke="#4a4a50" stroke-width="1.1"/><path d="M12 13h5M12 15.5h6" stroke="#7a8aa8" stroke-width="1"/></svg><svg style="position:absolute;left:252.9px;top:488.0px;opacity:1" width="22" height="22" viewBox="0 0 22 22"><rect x="2.2" y="2" width="18" height="18" rx="2" fill="#fff" stroke="#555" stroke-width="1.8"/><path d="M6 7.5h11M5 14.5h11" stroke="#8a8a8a" stroke-width="1.5"/><ellipse cx="8.5" cy="7.5" rx="2" ry="2.8" fill="#fff" stroke="#777" stroke-width="1.4"/><ellipse cx="13.5" cy="14.5" rx="2" ry="2.8" fill="#fff" stroke="#777" stroke-width="1.4"/></svg><svg style="position:absolute;left:280.2px;top:488.0px;opacity:1" width="22" height="22" viewBox="0 0 22 22"><rect x="3.5" y="10" width="14" height="10" rx="1" fill="none" stroke="#c4c4c4" stroke-width="1.5"/><path d="M6.5 10V6a4 4 0 0 1 8 0v4" fill="none" stroke="#c4c4c4" stroke-width="1.5"/></svg><div class="r" style="left:159.3px;top:488.0px;width:1.0px;height:22.0px;background:#7a7a7a;"></div><div class="r" style="left:247.2px;top:488.0px;width:1.0px;height:22.0px;background:#7a7a7a;"></div><svg style="position:absolute;left:308.29999999999995px;top:503px" width="9" height="9" viewBox="0 0 9 9"><path d="M1 1h7" stroke="#555" stroke-width="1.3"/><path d="M.5 3.5h8l-4 4z" fill="#555"/></svg><div class="r" style="left:325px;top:484px;width:104.29999999999995px;height:31px;background:#e9eef9;border-radius:5px"></div><div class="r" style="left:401.29999999999995px;top:484px;width:1px;height:31px;background:#eef2fb"></div><div style="position:absolute;left:329.5px;top:489px;width:3px;height:3px;background:#5a5a5a"></div><div style="position:absolute;left:329.5px;top:494px;width:3px;height:3px;background:#5a5a5a"></div><div style="position:absolute;left:329.5px;top:499px;width:3px;height:3px;background:#5a5a5a"></div><div style="position:absolute;left:329.5px;top:504px;width:3px;height:3px;background:#5a5a5a"></div><svg style="position:absolute;left:335.6px;top:488.0px;opacity:1.0" width="22" height="22" viewBox="0 0 22 22"><path d="M2.5 1.5h13l4 4v14h-17z" fill="#d4dff2" stroke="#8a9ac0" stroke-width="1"/><path d="M3 6h16M3 10.5h16M3 15h16M7 2v17M11.5 2v17M16 2v17" stroke="#fff" stroke-width=".8"/><rect x="5.5" y="5" width="10" height="8.5" fill="#f07010" stroke="#c05000" stroke-width=".6"/><rect x="8" y="7" width="2" height="4.5" fill="#ffe000"/><rect x="11.5" y="7" width="2" height="4.5" fill="#ffe000"/><path d="M6.5 1.5v18" stroke="#e03030" stroke-width="1"/></svg><svg style="position:absolute;left:362.0px;top:488.0px;opacity:1.0" width="22" height="22" viewBox="0 0 22 22"><rect x="2" y="7" width="6.5" height="13.5" fill="#e8ecf0" stroke="#5a6270" stroke-width="1.3"/><rect x="14" y="7" width="6.5" height="13.5" fill="#e8ecf0" stroke="#5a6270" stroke-width="1.3"/><path d="M4.2 10h2M4.2 13h2M4.2 16h2M16.2 10h2M16.2 13h2M16.2 16h2" stroke="#556" stroke-width="1"/><path d="M5 5Q11 0 17 5" fill="none" stroke="#111" stroke-width="1.6"/><path d="M2.5 6.5l4-3 .3 3.8zM19.5 6.5l-4-3-.3 3.8z" fill="#111"/></svg><svg style="position:absolute;left:389.7px;top:488.0px;opacity:1.0" width="22" height="22" viewBox="0 0 22 22"><rect x="4" y="1.5" width="15" height="11" fill="#e8f0fa" stroke="#2a60b0" stroke-width="1.3"/><path d="M1 3l6 4-6 4z" fill="#3cb048"/><circle cx="10" cy="4.5" r="1.3" fill="#222"/><path d="M11 6l2 3 3-1-2 3" stroke="#3a9ae0" stroke-width="1.6" fill="none"/><path d="M15 10.5v10.5M9.5 15.75h11" stroke="#2e9a30" stroke-width="3.6"/></svg><svg style="position:absolute;left:418.29999999999995px;top:503px" width="9" height="9" viewBox="0 0 9 9"><path d="M1 1h7" stroke="#555" stroke-width="1.3"/><path d="M.5 3.5h8l-4 4z" fill="#555"/></svg><div class="r" style="left:435px;top:484px;width:413.70000000000005px;height:31px;background:#e9eef9;border-radius:5px"></div><div class="r" style="left:820.7px;top:484px;width:1px;height:31px;background:#eef2fb"></div><div style="position:absolute;left:438.70000000000005px;top:489px;width:3px;height:3px;background:#5a5a5a"></div><div style="position:absolute;left:438.70000000000005px;top:494px;width:3px;height:3px;background:#5a5a5a"></div><div style="position:absolute;left:438.70000000000005px;top:499px;width:3px;height:3px;background:#5a5a5a"></div><div style="position:absolute;left:438.70000000000005px;top:504px;width:3px;height:3px;background:#5a5a5a"></div><div class="r" style="left:444.0px;top:486.0px;width:25.0px;height:27.0px;background:#b2d4f8;"></div><svg style="position:absolute;left:444.8px;top:488.0px;opacity:1.0" width="22" height="22" viewBox="0 0 22 22"><path d="M6.5 1.5v15l3.5-3.5 3 5.5 2.2-1.2-3-5.5h4.8z" fill="#fff" stroke="#2a58c0" stroke-width="1.3" stroke-linejoin="round"/></svg><svg style="position:absolute;left:473.0px;top:488.0px;opacity:1.0" width="22" height="22" viewBox="0 0 22 22"><path d="M6.2 7.2c0-3 2.5-4.7 5-4.7 3 0 5 1.8 5 4.2 0 3-4.2 3.3-4.5 6.5" fill="none" stroke="#2a58c0" stroke-width="3"/><circle cx="11.6" cy="17" r="2" fill="#2a58c0"/></svg><svg style="position:absolute;left:499.0px;top:488.0px;opacity:1.0" width="22" height="22" viewBox="0 0 22 22"><path d="M9 2.5h5v6h6v5h-6v6H9v-6H3v-5h6z" fill="#eef4ff" stroke="#2a58c0" stroke-width="1.7" stroke-linejoin="round"/><rect x="10.5" y="10" width="2" height="2" fill="#2a58c0"/></svg><svg style="position:absolute;left:526.4px;top:488.0px;opacity:1.0" width="22" height="22" viewBox="0 0 22 22"><circle cx="11" cy="10.5" r="8" fill="#e8f0fc" stroke="#2a58c0" stroke-width="1.7"/><circle cx="11" cy="10.5" r="5" fill="none" stroke="#2a58c0" stroke-width="1"/><path d="M11 3.5l2.2 2.8h-4.4zM11 17.5l2.2-2.8h-4.4zM4 10.5l2.8-2.2v4.4zM18 10.5l-2.8-2.2v4.4z" fill="#2a58c0"/><circle cx="11" cy="10.5" r="1.2" fill="#2a58c0"/></svg><svg style="position:absolute;left:559.6px;top:488.0px;opacity:1.0" width="22" height="22" viewBox="0 0 22 22"><defs><linearGradient id="hnd" x1="0" y1="0" x2="0" y2="1"><stop offset="0" stop-color="#d8e4f8"/><stop offset="1" stop-color="#fff"/></linearGradient></defs><path d="M4.5 16.5L1.8 11.5a1.3 1.3 0 0 1 2.2-1.3L6 13V4.5a1.4 1.4 0 0 1 2.8 0V10V2.8a1.4 1.4 0 0 1 2.8 0V10V3.5a1.4 1.4 0 0 1 2.8 0V10.5V6a1.4 1.4 0 0 1 2.8 0V13c0 3-1.5 5.5-4 5.5H8c-1.5 0-2.5-1-3.5-2z" fill="url(#hnd)" stroke="#2848b0" stroke-width="1.2" stroke-linejoin="round"/></svg><svg style="position:absolute;left:587.0px;top:488.0px;opacity:1.0" width="22" height="22" viewBox="0 0 22 22"><path d="M12.5 8.5l6-6" stroke="#d09a20" stroke-width="3.2"/><path d="M2 11c2 .5 3.5-1 5.5-3l5 4.5c-1.5 3-4 4.5-6.5 4.5S1.5 15 2 11z" fill="#2a68d8"/><path d="M7.5 8l5 4.5 2-2-5-4.5z" fill="#3050a0"/></svg><svg style="position:absolute;left:614.4px;top:488.0px;opacity:1.0" width="22" height="22" viewBox="0 0 22 22"><ellipse cx="13.5" cy="7.5" rx="5.5" ry="4" fill="none" stroke="#2848b0" stroke-width="1.6"/><path d="M9.5 10c-2 1.5-2 3.5-.5 4.5M9 14.5l-5.5 4" fill="none" stroke="#2848b0" stroke-width="1.6"/></svg><svg style="position:absolute;left:641.0px;top:488.0px;opacity:1.0" width="22" height="22" viewBox="0 0 22 22"><path d="M11.5 11.5l7 7" stroke="#c08a20" stroke-width="3"/><circle cx="8" cy="8" r="5.5" fill="#f0f6ff" stroke="#2a58c0" stroke-width="1.7"/></svg><svg style="position:absolute;left:668.0px;top:488.0px;opacity:1.0" width="22" height="22" viewBox="0 0 22 22"><path d="M10.8 2v15M3 9.5h15.5" stroke="#1f40b0" stroke-width="2.4"/></svg><svg style="position:absolute;left:694.9px;top:488.0px;opacity:1.0" width="22" height="22" viewBox="0 0 22 22"><path d="M2.5 16.5L16.5 2.5l3.5 3.5L6 20z" fill="#eef2fb" stroke="#2848b0" stroke-width="1.5" stroke-linejoin="round"/></svg><svg style="position:absolute;left:727.3px;top:488.0px;opacity:1.0" width="22" height="22" viewBox="0 0 22 22"><defs><linearGradient id="tbx" x1="0" y1="0" x2="0" y2="1"><stop offset="0" stop-color="#fff"/><stop offset="1" stop-color="#cfd9ea"/></linearGradient></defs><rect x="2.2" y="2.5" width="17.5" height="16" fill="url(#tbx)" stroke="#2a58c0" stroke-width="1.4"/><path d="M11 6h8M11 9h8M4 13h15M4 16h15" stroke="#c8d4e8" stroke-width="1"/><path d="M4.2 4.8h7v2.2h-2.4v5.5H6.6V7H4.2z" fill="#1f3f90"/></svg><svg style="position:absolute;left:755.0px;top:488.0px;opacity:1.0" width="22" height="22" viewBox="0 0 22 22"><rect x="2" y="3.5" width="17.5" height="3.5" fill="#0a2a9a"/><rect x="2" y="9.5" width="17.5" height="1.5" fill="#0a2a9a"/><rect x="2" y="14.5" width="15" height="1.6" fill="#0a2a9a"/><path d="M16 12l5 3.3-5 3.3z" fill="#0a2a9a"/></svg><svg style="position:absolute;left:781.6px;top:488.0px;opacity:1.0" width="22" height="22" viewBox="0 0 22 22"><path d="M2.5 8L7.5 2.5h7.5l1 3 4 7-4.5 6H2.5z" fill="#eef4fc" stroke="#2a58c0" stroke-width="1.4" stroke-linejoin="round"/></svg><svg style="position:absolute;left:809.0px;top:488.0px;opacity:1.0" width="22" height="22" viewBox="0 0 22 22"><ellipse cx="11.5" cy="11" rx="9" ry="5.8" fill="#eef4fc" stroke="#2a58c0" stroke-width="1.5"/></svg><div class="r" style="left:553.6px;top:488.0px;width:1.0px;height:22.0px;background:#7a7a7a;"></div><div class="r" style="left:721.3px;top:488.0px;width:1.0px;height:22.0px;background:#7a7a7a;"></div><svg style="position:absolute;left:837.7px;top:503px" width="9" height="9" viewBox="0 0 9 9"><path d="M1 1h7" stroke="#555" stroke-width="1.3"/><path d="M.5 3.5h8l-4 4z" fill="#555"/></svg><svg style="position:absolute;left:40px;top:535px" width="12" height="12" viewBox="0 0 12 12"><path d="M.5 11.5L11.5 .5v11z" fill="#b8b8b8" stroke="#888" stroke-width=".8"/></svg><div class="r" style="left:53.0px;top:527.0px;width:900.0px;height:27.0px;background:#ececec;border:1px solid #c4c4c4;border-right:none"></div><div class="r" style="left:57.5px;top:533.5px;width:15px;height:13px;border:1px solid #c4c4c4;border-radius:3px;background:#f2f2f2"></div><svg style="position:absolute;left:60.5px;top:537.5px" width="11" height="7" viewBox="0 0 11 7"><path d="M0.5 0.5h10l-5 6z" fill="#d40000"/></svg><div class="t" style="left:78.5px;top:533.6px;font-size:19.4px;color:#000;font-weight:700;">Graph Builder</div><div class="t" style="left:-28.0px;width:1000px;text-align:center;top:562.9px;font-size:20.2px;color:#000;font-weight:700;">Data vs. Tool</div><div class="r" style="left:121.5px;top:588.4px;width:771.8px;height:25.2px;background:#dcd9c9;"></div><div class="t" style="left:6.4px;width:1000px;text-align:center;top:592.2px;font-size:16.3px;color:#000;font-weight:700;">Plant</div><div class="r" style="left:121.5px;top:613.6px;width:251.9px;height:26.4px;background:#dcdacc;"></div><div class="r" style="left:122.5px;top:614.6px;width:249.9px;height:24.4px;background:#e7e6dd;"></div><div class="t" style="left:-252.6px;width:1000px;text-align:center;top:619.5px;font-size:16px;color:#000;">1</div><div class="r" style="left:381.3px;top:613.6px;width:251.5px;height:26.4px;background:#dcdacc;"></div><div class="r" style="left:382.3px;top:614.6px;width:249.5px;height:24.4px;background:#e7e6dd;"></div><div class="t" style="left:7.0px;width:1000px;text-align:center;top:619.5px;font-size:16px;color:#000;">2</div><div class="r" style="left:639.4px;top:613.6px;width:253.9px;height:26.4px;background:#dcdacc;"></div><div class="r" style="left:640.4px;top:614.6px;width:251.9px;height:24.4px;background:#e7e6dd;"></div><div class="t" style="left:266.3px;width:1000px;text-align:center;top:619.5px;font-size:16px;color:#000;">3</div><div class="r" style="left:374.0px;top:613.0px;width:7.0px;height:275.0px;background:#d9d9d9;"></div><div class="r" style="left:633.0px;top:613.0px;width:6.4px;height:275.0px;background:#d9d9d9;"></div><div class="t" style="left:-363.6px;width:1000px;text-align:center;top:894.0px;font-size:16px;color:#000;">A</div><div class="t" style="left:-332.6px;width:1000px;text-align:center;top:894.0px;font-size:16px;color:#000;">B</div><div class="t" style="left:-301.6px;width:1000px;text-align:center;top:894.0px;font-size:16px;color:#000;">C</div><div class="t" style="left:-268.6px;width:1000px;text-align:center;top:894.0px;font-size:16px;color:#000;">D</div><div class="t" style="left:-237.6px;width:1000px;text-align:center;top:894.0px;font-size:16px;color:#000;">E</div><div class="t" style="left:-204.4px;width:1000px;text-align:center;top:894.0px;font-size:16px;color:#000;">G</div><div class="t" style="left:-173.9px;width:1000px;text-align:center;top:894.0px;font-size:16px;color:#000;">H</div><div class="t" style="left:-142.8px;width:1000px;text-align:center;top:894.0px;font-size:16px;color:#000;">I</div><div class="t" style="left:-103.7px;width:1000px;text-align:center;top:894.0px;font-size:16px;color:#000;">A</div><div class="t" style="left:-72.7px;width:1000px;text-align:center;top:894.0px;font-size:16px;color:#000;">B</div><div class="t" style="left:-41.7px;width:1000px;text-align:center;top:894.0px;font-size:16px;color:#000;">C</div><div class="t" style="left:-9.5px;width:1000px;text-align:center;top:894.0px;font-size:16px;color:#000;">D</div><div class="t" style="left:22.2px;width:1000px;text-align:center;top:894.0px;font-size:16px;color:#000;">E</div><div class="t" style="left:53.2px;width:1000px;text-align:center;top:894.0px;font-size:16px;color:#000;">G</div><div class="t" style="left:85.5px;width:1000px;text-align:center;top:894.0px;font-size:16px;color:#000;">H</div><div class="t" style="left:116.5px;width:1000px;text-align:center;top:894.0px;font-size:16px;color:#000;">I</div><div class="t" style="left:155.5px;width:1000px;text-align:center;top:894.0px;font-size:16px;color:#000;">A</div><div class="t" style="left:186.5px;width:1000px;text-align:center;top:894.0px;font-size:16px;color:#000;">B</div><div class="t" style="left:217.5px;width:1000px;text-align:center;top:894.0px;font-size:16px;color:#000;">C</div><div class="t" style="left:250.5px;width:1000px;text-align:center;top:894.0px;font-size:16px;color:#000;">D</div><div class="t" style="left:281.5px;width:1000px;text-align:center;top:894.0px;font-size:16px;color:#000;">E</div><div class="t" style="left:313.2px;width:1000px;text-align:center;top:894.0px;font-size:16px;color:#000;">G</div><div class="t" style="left:345.5px;width:1000px;text-align:center;top:894.0px;font-size:16px;color:#000;">H</div><div class="t" style="left:376.5px;width:1000px;text-align:center;top:894.0px;font-size:16px;color:#000;">I</div><svg style="position:absolute;left:0;top:0" width="1922" height="1008" viewBox="0 0 1922 1008"><rect x="122" y="640" width="251" height="248" fill="#fff"/><rect x="122" y="863" width="251" height="1" fill="#d0d0d0"/><rect x="122" y="839" width="251" height="1" fill="#e4e4e4"/><rect x="122" y="815" width="251" height="1" fill="#d0d0d0"/><rect x="122" y="791" width="251" height="1" fill="#e4e4e4"/><rect x="122" y="766" width="251" height="1" fill="#d0d0d0"/><rect x="122" y="742" width="251" height="1" fill="#e4e4e4"/><rect x="122" y="717" width="251" height="1" fill="#d0d0d0"/><rect x="122" y="693" width="251" height="1" fill="#e4e4e4"/><rect x="122" y="668" width="251" height="1" fill="#d0d0d0"/><rect x="122" y="644" width="251" height="1" fill="#e4e4e4"/><rect x="137" y="640" width="1" height="248" fill="#d4d4d4"/><rect x="168" y="640" width="1" height="248" fill="#d4d4d4"/><rect x="199" y="640" width="1" height="248" fill="#d4d4d4"/><rect x="232" y="640" width="1" height="248" fill="#d4d4d4"/><rect x="263" y="640" width="1" height="248" fill="#d4d4d4"/><rect x="297" y="640" width="1" height="248" fill="#d4d4d4"/><rect x="327" y="640" width="1" height="248" fill="#d4d4d4"/><rect x="358" y="640" width="1" height="248" fill="#d4d4d4"/><rect x="122" y="706" width="251" height="1" fill="#3568e0"/><rect x="122" y="827" width="251" height="1" fill="#3568e0"/><circle cx="168.9" cy="683.9" r="3.3" fill="#f2a31e"/><circle cx="168.9" cy="770.7" r="3.3" fill="#1f6f8e"/><circle cx="168.9" cy="864.5" r="3.3" fill="#f2a31e"/><circle cx="199.9" cy="707.5" r="3.3" fill="#1f6f8e"/><circle cx="199.9" cy="720.4" r="3.3" fill="#1f6f8e"/><circle cx="199.9" cy="746.9" r="3.3" fill="#1f6f8e"/><circle cx="232.4" cy="876.2" r="3.3" fill="#f2a31e"/><circle cx="327.6" cy="673.5" r="3.3" fill="#f2a31e"/><circle cx="327.6" cy="857.8" r="3.3" fill="#f2a31e"/><circle cx="358.7" cy="729.8" r="3.3" fill="#1f6f8e"/><circle cx="358.7" cy="817.1" r="3.3" fill="#1f6f8e"/><rect x="122" y="888" width="251" height="1" fill="#a0a0a0"/><rect x="381" y="640" width="252" height="248" fill="#fff"/><rect x="381" y="863" width="252" height="1" fill="#d0d0d0"/><rect x="381" y="839" width="252" height="1" fill="#e4e4e4"/><rect x="381" y="815" width="252" height="1" fill="#d0d0d0"/><rect x="381" y="791" width="252" height="1" fill="#e4e4e4"/><rect x="381" y="766" width="252" height="1" fill="#d0d0d0"/><rect x="381" y="742" width="252" height="1" fill="#e4e4e4"/><rect x="381" y="717" width="252" height="1" fill="#d0d0d0"/><rect x="381" y="693" width="252" height="1" fill="#e4e4e4"/><rect x="381" y="668" width="252" height="1" fill="#d0d0d0"/><rect x="381" y="644" width="252" height="1" fill="#e4e4e4"/><rect x="397" y="640" width="1" height="248" fill="#d4d4d4"/><rect x="428" y="640" width="1" height="248" fill="#d4d4d4"/><rect x="459" y="640" width="1" height="248" fill="#d4d4d4"/><rect x="492" y="640" width="1" height="248" fill="#d4d4d4"/><rect x="523" y="640" width="1" height="248" fill="#d4d4d4"/><rect x="554" y="640" width="1" height="248" fill="#d4d4d4"/><rect x="586" y="640" width="1" height="248" fill="#d4d4d4"/><rect x="618" y="640" width="1" height="248" fill="#d4d4d4"/><rect x="381" y="706" width="252" height="1" fill="#3568e0"/><rect x="381" y="827" width="252" height="1" fill="#3568e0"/><circle cx="428.8" cy="698.5" r="3.3" fill="#f2a31e"/><circle cx="428.8" cy="801.5" r="3.3" fill="#1f6f8e"/><circle cx="491.7" cy="752.5" r="3.3" fill="#1f6f8e"/><circle cx="523.2" cy="858.2" r="3.3" fill="#f2a31e"/><circle cx="554.7" cy="653.9" r="3.3" fill="#f2a31e"/><circle cx="618.0" cy="748.6" r="3.3" fill="#1f6f8e"/><circle cx="618.0" cy="786.0" r="3.3" fill="#1f6f8e"/><rect x="381" y="888" width="252" height="1" fill="#a0a0a0"/><rect x="639" y="640" width="254" height="248" fill="#fff"/><rect x="639" y="863" width="254" height="1" fill="#d0d0d0"/><rect x="639" y="839" width="254" height="1" fill="#e4e4e4"/><rect x="639" y="815" width="254" height="1" fill="#d0d0d0"/><rect x="639" y="791" width="254" height="1" fill="#e4e4e4"/><rect x="639" y="766" width="254" height="1" fill="#d0d0d0"/><rect x="639" y="742" width="254" height="1" fill="#e4e4e4"/><rect x="639" y="717" width="254" height="1" fill="#d0d0d0"/><rect x="639" y="693" width="254" height="1" fill="#e4e4e4"/><rect x="639" y="668" width="254" height="1" fill="#d0d0d0"/><rect x="639" y="644" width="254" height="1" fill="#e4e4e4"/><rect x="656" y="640" width="1" height="248" fill="#d4d4d4"/><rect x="688" y="640" width="1" height="248" fill="#d4d4d4"/><rect x="718" y="640" width="1" height="248" fill="#d4d4d4"/><rect x="752" y="640" width="1" height="248" fill="#d4d4d4"/><rect x="782" y="640" width="1" height="248" fill="#d4d4d4"/><rect x="814" y="640" width="1" height="248" fill="#d4d4d4"/><rect x="846" y="640" width="1" height="248" fill="#d4d4d4"/><rect x="878" y="640" width="1" height="248" fill="#d4d4d4"/><rect x="639" y="706" width="254" height="1" fill="#3568e0"/><rect x="639" y="827" width="254" height="1" fill="#3568e0"/><circle cx="655.8" cy="762.5" r="3.3" fill="#1f6f8e"/><circle cx="719.0" cy="719.8" r="3.3" fill="#1f6f8e"/><circle cx="751.0" cy="747.6" r="3.3" fill="#1f6f8e"/><circle cx="751.0" cy="798.0" r="3.3" fill="#1f6f8e"/><circle cx="814.2" cy="765.0" r="3.3" fill="#1f6f8e"/><circle cx="814.2" cy="828.5" r="3.3" fill="#f2a31e"/><circle cx="846.2" cy="787.5" r="3.3" fill="#1f6f8e"/><circle cx="878.0" cy="721.1" r="3.3" fill="#1f6f8e"/><rect x="639" y="888" width="254" height="1" fill="#a0a0a0"/></svg><div class="r" style="left:893.0px;top:640.0px;width:1.0px;height:248.0px;background:#b8b8b8;"></div><div class="r" style="left:121.0px;top:640.0px;width:1.0px;height:249.0px;background:#9a9a9a;"></div><div class="r" style="left:114.0px;top:863.0px;width:7.0px;height:1.0px;background:#9a9a9a;"></div><div class="r" style="left:117.0px;top:839.0px;width:4.0px;height:1.0px;background:#9a9a9a;"></div><div class="r" style="left:114.0px;top:815.0px;width:7.0px;height:1.0px;background:#9a9a9a;"></div><div class="r" style="left:117.0px;top:791.0px;width:4.0px;height:1.0px;background:#9a9a9a;"></div><div class="r" style="left:114.0px;top:766.0px;width:7.0px;height:1.0px;background:#9a9a9a;"></div><div class="r" style="left:117.0px;top:742.0px;width:4.0px;height:1.0px;background:#9a9a9a;"></div><div class="r" style="left:114.0px;top:717.0px;width:7.0px;height:1.0px;background:#9a9a9a;"></div><div class="r" style="left:117.0px;top:693.0px;width:4.0px;height:1.0px;background:#9a9a9a;"></div><div class="r" style="left:114.0px;top:668.0px;width:7.0px;height:1.0px;background:#9a9a9a;"></div><div class="r" style="left:117.0px;top:644.0px;width:4.0px;height:1.0px;background:#9a9a9a;"></div><div class="t" style="left:-889.0px;width:1000px;text-align:right;top:856.6px;font-size:16px;color:#000;">0</div><div class="t" style="left:-889.0px;width:1000px;text-align:right;top:759.2px;font-size:16px;color:#000;">4</div><div class="t" style="left:-889.0px;width:1000px;text-align:right;top:661.8px;font-size:16px;color:#000;">8</div><div class="t" style="left:-890.2px;width:1000px;text-align:right;top:697.5px;font-size:16.5px;color:#3a6af5;transform:scaleX(.9);transform-origin:1000px 0">USL</div><div class="r" style="left:113.0px;top:706.0px;width:8.0px;height:1.0px;background:#3568e0;"></div><div class="t" style="left:-890.2px;width:1000px;text-align:right;top:818.5px;font-size:16.5px;color:#3a6af5;transform:scaleX(.84);transform-origin:1000px 0">LSL</div><div class="r" style="left:113.0px;top:827.0px;width:8.0px;height:1.0px;background:#3568e0;"></div><div class="t" style="left:-436.5px;width:1000px;text-align:center;top:755.0px;font-size:16px;color:#000;transform:rotate(-90deg);transform-origin:500px 8.0px">Data</div><div class="t" style="left:5.8px;width:1000px;text-align:center;top:918.0px;font-size:16px;color:#000;">Tool</div><div class="t" style="left:901.0px;top:602.0px;font-size:16px;color:#000;">OOS</div><div class="r" style="left:907px;top:633px;width:7px;height:7px;border-radius:50%;background:#1f6f8e"></div><div class="r" style="left:907px;top:654px;width:7px;height:7px;border-radius:50%;background:#f2a31e"></div><div class="t" style="left:924.5px;top:629.0px;font-size:16px;color:#000;">0</div><div class="t" style="left:924.5px;top:650.0px;font-size:16px;color:#000;">1</div><div class="r" style="left:37.0px;top:938.0px;width:918.0px;height:1.0px;background:#111;"></div><div class="r" style="left:37.0px;top:939.0px;width:918.0px;height:1.0px;background:#a8b4d8;"></div><div class="r" style="left:37.0px;top:940.0px;width:918.0px;height:2.0px;background:#fafbfd;"></div><div class="r" style="left:37.0px;top:942.0px;width:918.0px;height:24.0px;background:#e0e6f0;"></div><div class="r" style="left:36.0px;top:966.0px;width:920.0px;height:1.0px;background:#555;"></div><div class="t" style="left:45.0px;top:945.8px;font-size:15px;color:#3b5b8a;">evaluations done</div><div class="r" style="left:833.4px;top:942.0px;width:1.0px;height:22.0px;background:#a0a8b8;"></div><svg style="position:absolute;left:840.4px;top:944px" width="17" height="16" viewBox="0 0 17 16"><path d="M8.5 1L1 8h2v7.5h11V8h2z" fill="#eef6fc" stroke="#3a9ad8" stroke-width="1.4" stroke-linejoin="round"/><rect x="7" y="9" width="3.5" height="6.5" fill="#a06a18"/></svg><svg style="position:absolute;left:860.4px;top:944px" width="16" height="15" viewBox="0 0 16 15"><rect x=".7" y=".7" width="13" height="11" fill="#fff" stroke="#1f5fb0" stroke-width="1.3"/><path d="M1 4.5h13M1 8h13M4.5 1v11M8 1v11M11 1v11" stroke="#e87878" stroke-width=".6"/><circle cx="9" cy="6" r="1.4" fill="#111"/><path d="M9 8l5 3M12 7l-1.5 7.5" stroke="#2a8ad8" stroke-width="1.5"/></svg><div class="r" style="left:890.4px;top:945px;width:14px;height:14px;border:1px solid #555;background:#fff"></div><svg style="position:absolute;left:891.4px;top:946px" width="14" height="14" viewBox="0 0 14 14"><path d="M2.2 7.2l3.2 3.6 6.2-8" fill="none" stroke="#1a1a1a" stroke-width="2.6"/></svg><svg style="position:absolute;left:913.4px;top:948px" width="11" height="8" viewBox="0 0 11 8"><path d="M0.5 .5h10l-5 7z" fill="#000"/></svg><div class="r" style="left:951.0px;top:952.0px;width:2.0px;height:2.0px;background:#b4bcd4;"></div><div class="r" style="left:948.0px;top:955.0px;width:2.0px;height:2.0px;background:#b4bcd4;"></div><div class="r" style="left:951.0px;top:955.0px;width:2.0px;height:2.0px;background:#b4bcd4;"></div><div class="r" style="left:945.0px;top:958.0px;width:2.0px;height:2.0px;background:#b4bcd4;"></div><div class="r" style="left:948.0px;top:958.0px;width:2.0px;height:2.0px;background:#b4bcd4;"></div><div class="r" style="left:951.0px;top:958.0px;width:2.0px;height:2.0px;background:#b4bcd4;"></div><div class="r" style="left:942.0px;top:961.0px;width:2.0px;height:2.0px;background:#b4bcd4;"></div><div class="r" style="left:945.0px;top:961.0px;width:2.0px;height:2.0px;background:#b4bcd4;"></div><div class="r" style="left:948.0px;top:961.0px;width:2.0px;height:2.0px;background:#b4bcd4;"></div><div class="r" style="left:951.0px;top:961.0px;width:2.0px;height:2.0px;background:#b4bcd4;"></div>
</body></html>
